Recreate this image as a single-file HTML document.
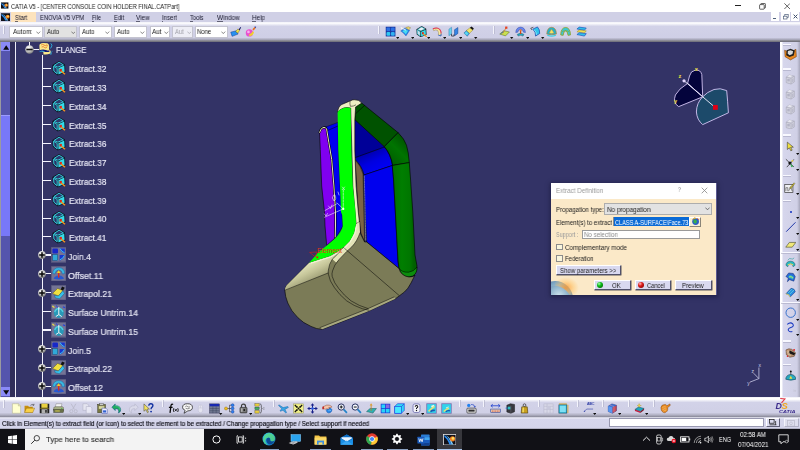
<!DOCTYPE html>
<html><head><meta charset="utf-8"><title>CATIA V5</title>
<style>
*{box-sizing:border-box;margin:0;padding:0}
html,body{width:800px;height:450px;overflow:hidden;background:#333366;font-family:"Liberation Sans",sans-serif;}
body{position:relative}
.abs,.t,i{position:absolute;display:block}
.t{white-space:nowrap;transform-origin:0 50%;will-change:transform}
#title{position:absolute;left:0;top:0;width:800px;height:12px;background:#fff}
#menu{position:absolute;left:0;top:12px;width:800px;height:10px;background:#d0d0e6}
#tb{position:absolute;left:0;top:21.7px;width:800px;height:20.6px;background:linear-gradient(#e4e4f2 0,#fff .8px,#f6f6fb 1.8px,#d2d2e8 4.3px,#cfcfe6 15.5px,#a8a8ba 17.5px,#808086 19px,#6a6a78 20px,#333366 20.6px)}
#view{position:absolute;left:0;top:42px;width:780px;height:354.5px;background:#333366}
#rtb{position:absolute;left:779.8px;top:42px;width:20.2px;height:354.5px;background:linear-gradient(90deg,#fff 0,#fff 1.6px,#d6d6ec 3.3px,#d0d0e6 17px,#a4a4b8 20.2px)}
#btb{position:absolute;left:0;top:396.5px;width:800px;height:21px;background:linear-gradient(#e8e8f4 0,#fff 1px,#fff 2.2px,#d2d2e8 5.5px,#d0d0e6 15.5px,#b0b0c2 18px,#8c8c9c 19.7px,#c8c8d8 20.3px,#f4f4fc 21px)}
#status{position:absolute;left:0;top:417.5px;width:800px;height:11.5px;background:linear-gradient(#f0f0fa 0,#d6d6ec 1px,#d4d4ea 9.5px,#a0a0b0 11px,#505058 11.5px)}
#task{position:absolute;left:0;top:428px;width:800px;height:22px;background:#1c1f2b}
.hl{left:42.5px;width:8.5px;height:1.2px;background:#f4f4ff}
</style></head><body>
<div id="title"></div>
<div id="menu"><i style="left:11px;top:0;width:25px;height:10px;background:#fde3bd"></i></div>
<div id="tb"></div>
<div id="view"></div>
<svg class="abs" style="left:0;top:0" width="800" height="450" viewBox="0 0 800 450">
<defs>
<linearGradient id="gRoll" gradientUnits="userSpaceOnUse" x1="366" y1="150" x2="376" y2="172"><stop offset="0" stop-color="#0000a0"/><stop offset="0.55" stop-color="#0000e0"/><stop offset="1" stop-color="#0000f4"/></linearGradient>
<linearGradient id="gBody" gradientUnits="userSpaceOnUse" x1="300" y1="262" x2="312" y2="286"><stop offset="0" stop-color="#f2f2cc"/><stop offset="0.5" stop-color="#c6c69a"/><stop offset="1" stop-color="#8c8c66"/></linearGradient>
<linearGradient id="gGreenR" gradientUnits="userSpaceOnUse" x1="394" y1="0" x2="414" y2="0"><stop offset="0" stop-color="#007200"/><stop offset="0.4" stop-color="#007e00"/><stop offset="0.8" stop-color="#007600"/><stop offset="1" stop-color="#006000"/></linearGradient>
<linearGradient id="gGreenC" gradientUnits="userSpaceOnUse" x1="388" y1="158" x2="406" y2="140"><stop offset="0" stop-color="#006000"/><stop offset="0.5" stop-color="#007400"/><stop offset="1" stop-color="#005400"/></linearGradient>
</defs>
<g stroke-linejoin="round" stroke-linecap="round">
<!-- purple -->
<path d="M319.6,132 Q320.5,128.5 323,127.6 Q325.6,126.8 326.6,129 L328.9,142.8 L331.7,159.4 L333.9,186 L335.5,212 L335.3,226 L335,238 L326.7,245.5 L325,226 L324.5,212 L321.7,186 L320.3,150 Z" fill="#8000f0" stroke="#000" stroke-width=".6"/>
<!-- blue left strip -->
<path d="M325.6,127 L338,122.4 L338.3,150 L340,186 L342,216 L342.8,226 L336.7,236.5 L335,238 L335.3,226 L335.5,212 L333.9,186 L331.7,159.4 L328.9,142.8 L326.6,129 Z" fill="#0000f0" stroke="#000" stroke-width=".4"/>
<path d="M327.4,130.6 L338,126" fill="none" stroke="#000" stroke-width=".5"/>
<path d="M319.6,132.4 Q320.5,128.5 323,127.6 Q325.6,126.8 326.6,129 L328.9,142.8 L331.7,159.4 L333.9,186 L335.5,212 L335.5,226 L335.2,237" fill="none" stroke="#000" stroke-width="2"/>
<path d="M319.6,132.4 Q320.5,128.5 323,127.6 Q325.6,126.8 326.6,129 L328.9,142.8 L331.7,159.4 L333.9,186 L335.5,212 L335.5,226 L335.2,237" fill="none" stroke="#e4e4b4" stroke-width="1"/>
<!-- dark blue triangle -->
<path d="M355,119 L384.5,147 L355,158 Z" fill="#000098"/>
<!-- rolled blue -->
<path d="M355.4,157.5 L384.5,147 Q390.5,154 392.6,165.4 L364,175 Q362,166 355.4,160 Z" fill="url(#gRoll)" stroke="#000" stroke-width=".6"/>
<!-- big blue face -->
<path d="M364,175 L392.6,165.4 L393.6,180 L398,262 L399,268.5 L366.7,242 L364,190 Z" fill="#0000ee" stroke="#000" stroke-width=".5"/>
<!-- brown -->
<path d="M355.4,160 Q361,166 363,174 L363.9,215 L364.6,242 L361,233 L359.4,221.7 L358.3,212 L356.4,180 Z" fill="#7c6444" stroke="#000" stroke-width=".4"/>
<path d="M364.3,176 L365.2,215 L365.8,240" fill="none" stroke="#c4c49c" stroke-width=".5" stroke-dasharray="1.6 1"/>
<!-- dark green upper band -->
<path d="M355.6,105 L361.7,103.1 L398.3,132.8 L384.5,146.8 L354.9,119.7 Z" fill="#005200" stroke="#000" stroke-width=".6"/>
<path d="M364.5,105.5 L355.3,114" fill="none" stroke="#000" stroke-width=".6"/>
<!-- green corner -->
<path d="M398.3,132.8 Q404.5,139 406.5,145.2 Q408.6,152 409.3,162.6 L392.6,165.4 Q391,154 384.5,146.8 Z" fill="url(#gGreenC)" stroke="#000" stroke-width=".6"/>
<!-- green right band -->
<path d="M392.6,165.4 L409.3,162.6 L410.6,180 L412.8,212 L415,255 L417,266 Q417,276 409,277 Q401,276 399,268 L398,260 L393.6,180 Z" fill="url(#gGreenR)" stroke="#000" stroke-width=".6"/>
<path d="M399,268.5 Q402,272.6 408.5,272.2 Q414,271.6 417,267 Q417.5,276 409,277 Q401,276.5 399,268.5 Z" fill="#0c8c0c" stroke="#000" stroke-width=".5"/>
<!-- cream cap + strip -->
<path d="M337.6,111 Q338.5,106 341.7,104.5 L350,101 Q352.5,99.7 354.1,99.7 Q359.5,99.5 361.7,103.1 L355.6,107 L354.8,120 L354.8,150 L356.1,186 L358.3,212 L359.4,221.7 L360,232.8 L356.1,224 L352.8,186 L350.7,108 Q343,106 337.6,112 Z" fill="#eeeec4" stroke="#000" stroke-width=".6"/>
<path d="M350,101.5 Q349.6,104 350.4,106.3 Q353.5,106.5 355.6,105" fill="none" stroke="#000" stroke-width=".5"/>
<!-- body -->
<path d="M360,232.8 L364.6,242 L366.7,242 L399,268.5 Q401,276 409,277 Q414,277 415,275 L411,283 Q408,289 404.4,292 L395.5,298.7 L368.9,310.9 L346.7,319.8 L322.2,329.3 Q316,329 311,326.4 Q303,323 297.8,317.6 Q291,311 287.8,303 Q285,296 284.9,290.9 Q285,287.5 286.7,285.3 L309.2,262.7 L321.3,258.8 L330,256 L337.8,251.5 L344,246.8 L349.5,241.3 L354.1,232.8 L355.7,225 L356.1,224 L359.4,221.7 Z" fill="#7b7b57" stroke="#000" stroke-width=".6"/>
<!-- cream band along green -->
<path d="M356.1,224 L359.4,221.7 L360,232.8 Q358.5,237 356.5,240.6 Q354.5,244 351.8,246.8 L346.7,251.5 L339.3,259.2 L336.2,262.6 L332.3,259.2 L337.8,253.8 L343.6,247.6 L337.8,251.5 L344,246.8 L349.5,241.3 L354.1,232.8 L355.7,225 Z" fill="#e4e4b8"/>
<!-- light fillet top-left -->
<path d="M309.2,262.7 L321.3,258.8 L330,256 L337.8,251.5 L343.6,247.6 L337.8,253.8 L332.3,259.2 Q329,264 328.4,270 L328,273 L284.9,290.5 Q285,287.5 286.7,285.3 Z" fill="url(#gBody)"/>
<path d="M322.2,329.3 L368.9,310.9 L395.5,298.7 L394,297 L368,308.6 L320,327.6 Z" fill="#a8a880"/>
<g fill="none" stroke="#000" stroke-width=".5">
<path d="M284.9,290.2 L327.8,273.1"/>
<path d="M343.6,247.6 L337.8,253.8 L332.3,259.2 Q329,264 328.4,270 Q328,272 328.4,274.2 Q329.5,281 334.4,287.6 Q339.5,295 346.7,300.9 Q354,306 362.2,308.7 L368.9,310.2"/>
<path d="M360,232.8 Q358.5,237 356.5,240.6 Q354.5,244 351.8,246.8 L346.7,251.5 L339.3,259.2 Q334,265 332.5,271 Q331.6,274 332.2,276.4 Q334,283 338.9,288.7 Q344,295.5 351.1,300.9 Q359,306 368,308.6"/>
<path d="M343.6,247.6 L398.9,295.3"/>
<path d="M320,327.6 L368,308.6 L394,297"/>
</g>
<!-- bright green -->
<path d="M337.6,112 Q343,106 350.7,108 L351.4,150 L352.8,186 L355.5,212 L356.1,224 L355.7,225 L354.1,232.8 Q352.4,237.4 349.5,241.3 L344,246.8 L337.8,251.5 L330,256 L321.3,258.8 L309.2,262.7 L317.8,253.1 L326.3,246 Q332,241.5 335.6,238.1 Q342,231 342.8,226 L342.2,215 L341,212 L340,186 L338.3,150 Z" fill="#00ff00"/>
<path d="M356.5,226 L355,233.4 L350.4,242 L344.8,247.7 L338.6,252.5 L330.6,257 L321.6,259.8 L311,263.2" fill="none" stroke="#fafae4" stroke-width=".9" opacity=".9"/>
<!-- axis overlay -->
<g fill="none" stroke="#ececf8" stroke-width=".6">
<path d="M343.3,208.9 L343.3,188.5" stroke-dasharray="2.2 1.2"/>
<path d="M343.3,208.9 L324.6,217.2"/>
<path d="M343.3,208.9 L337,203"/>
<path d="M336.5,204 L325,210.5"/>
<path d="M333.5,195 Q331,198 334,201 Q337,199 335,195"/>
<path d="M338,192 L339,195"/>
<path d="M342.3,187 L344.6,189.6 M344.6,187 L342.3,189.6"/>
<path d="M328.5,206 L330.5,208.5 L332,205"/>
<path d="M324.5,214 L326,216 L327.5,213.5"/>
</g>
<circle cx="343.3" cy="208.9" r="1.1" fill="#fff"/>
<!-- red element marker -->
<g fill="none" stroke="#e01818" stroke-width=".6"><path d="M310,252.4 L317,252 L315.3,256.3 Z"/></g>
<circle cx="317.3" cy="257.3" r="1.1" fill="#f01010"/>
<text x="317" y="252.7" font-family="Liberation Sans, sans-serif" font-size="6.8" fill="#e43414" textLength="25" lengthAdjust="spacingAndGlyphs">Element</text>
</g>
</svg>

<svg class="abs" style="left:0;top:0" width="800" height="450" viewBox="0 0 800 450">
<g stroke="#d4c4f4" stroke-width=".9" stroke-linejoin="round">
<path d="M702.7,96.8 L701.8,74.6 Q700.5,69.5 695.5,70 Q690.5,71 689.5,76 L687.6,83.4 Z" fill="#04043c"/>
<path d="M702.7,96.8 L687.6,83.4 Q678.5,89 675.4,95 Q672.6,103 678.7,106.6 Z" fill="#04043c"/>
<path d="M702.7,96.8 Q696.5,103 696.4,112 Q697,120 702.7,124.6 L728.4,112.8 L727.6,101.2 L726.7,90.6 Q720,87.5 714,89.5 Q707,92 702.7,96.8 Z" fill="#1c4a6a"/>
<path d="M702.7,96.8 L684.6,81.2 M702.7,96.8 L715.1,107.4" fill="none" stroke="#f0f0ff"/>
</g>
<circle cx="684" cy="80.8" r="1.6" fill="#e4d8ff"/>
<rect x="713" y="105" width="4.8" height="4.8" fill="#e00014"/>
<g font-family="Liberation Sans, sans-serif" font-size="5.6" fill="#f0e040" font-weight="bold"><text x="678.4" y="78.4">z</text><text x="694.8" y="70.6">x</text><text x="674" y="103.4">y</text></g>
<g stroke="#c8c8e4" stroke-width=".8" fill="none"><path d="M758.9,378.6 V367.5 M758.9,378.6 L753.6,373.2 M758.9,378.6 L750,382.1"/></g>
<g font-family="Liberation Sans, sans-serif" font-size="5" fill="#d0d0e8"><text x="758.6" y="367.4">x</text><text x="751.6" y="372.6">z</text><text x="747.2" y="384.6">y</text></g>
</svg>
<div id="rtb"></div>
<div id="dialog" class="abs" style="left:0;top:0">
<div class="abs" style="left:550.7px;top:182.7px;width:166px;height:112.8px;background:#5a5890;box-shadow:0 1px 4px 1px rgba(20,20,50,.55)"></div>
<div class="abs" style="left:551.2px;top:183.2px;width:165px;height:111.8px;background:#fbe9c8;overflow:hidden"><i style="left:0;top:0;width:165px;height:15.5px;background:#fff"></i><i style="left:-14px;top:98px;width:36px;height:36px;border-radius:50%;background:radial-gradient(circle at 60% 35%,#b8d4e0 0,#7fa8c4 35%,#4a6a90 60%,#3a4a70 75%)"></i><i style="left:4px;top:94px;width:24px;height:18px;background:radial-gradient(ellipse at 45% 60%,rgba(255,150,40,.8) 0,rgba(255,190,90,.45) 40%,rgba(255,220,150,0) 70%)"></i><i style="left:-12px;top:102.5px;width:32px;height:32px;border-radius:50%;background:radial-gradient(circle at 62% 30%,#cfe4ec 0,#8fb4cc 30%,#56789c 58%,#3a4a72 78%)"></i></div>
<span class="t" style="left:555.70px;top:185.94px;font-size:6.8px;line-height:9.52px;color:#9a9a9a;transform:scaleX(0.9222);">Extract Definition</span>
<span class="t" style="left:678.40px;top:185.42px;font-size:7.4px;line-height:10.36px;color:#888;transform:scaleX(0.6804);">?</span>
<svg class="abs" style="left:700.5px;top:187.2px" width="7" height="7" viewBox="0 0 7 7"><path d="M.7,.7 L6.3,6.3 M6.3,.7 L.7,6.3" stroke="#888" stroke-width=".8" fill="none"/></svg>
<span class="t" style="left:555.70px;top:204.70px;font-size:7px;line-height:9.8px;color:#1c1c1c;transform:scaleX(0.8712);">Propagation type:</span>
<i style="left:604.2px;top:203px;width:107.5px;height:11.5px;background:#e2e2e2;border:.6px solid #adadad"></i>
<span class="t" style="left:606.60px;top:204.60px;font-size:7px;line-height:9.8px;color:#1c1c1c;transform:scaleX(0.9067);">No propagation</span>
<svg class="abs" style="left:705px;top:207px" width="5" height="4" viewBox="0 0 5 4"><path d="M.4,.6 L2.5,2.8 L4.6,.6" stroke="#444" stroke-width=".7" fill="none"/></svg>
<span class="t" style="left:555.70px;top:217.50px;font-size:7px;line-height:9.8px;color:#1c1c1c;transform:scaleX(0.8688);">Element(s) to extract</span>
<i style="left:613.4px;top:216.7px;width:76px;height:9.8px;background:#fff;border:.6px solid #8a8a8a"></i>
<i style="left:614px;top:217.3px;width:74.8px;height:8.4px;background:#0a6ad6"></i>
<span class="t" style="left:615.00px;top:217.58px;font-size:6.6px;line-height:9.24px;color:#fff;transform:scaleX(0.8479);">CLASS A-SURFACE\Face.73</span>
<i style="left:689.4px;top:216.5px;width:11.2px;height:10.2px;background:#f6eed6;border:.6px solid;border-color:#fff #8a8478 #8a8478 #fff"></i>
<svg class="abs" style="left:690.6px;top:217.4px" width="9" height="8.6" viewBox="0 0 9 8.6"><circle cx="4.6" cy="4.6" r="3.4" fill="#2a5cc8"/><path d="M2.4,3.4 Q4,1.8 5.6,3.2 Q6.4,4.8 5,6.4 Q3.4,6.6 2.6,5.2 Z" fill="#38b048"/><path d="M1,2.8 L4,.4 L5,1.6" fill="#f0c020" stroke="#a06000" stroke-width=".3"/><path d="M6.4,1.2 L7.8,2.8" stroke="#e04020" stroke-width=".8"/></svg>
<span class="t" style="left:555.70px;top:229.90px;font-size:7px;line-height:9.8px;color:#9c9c9c;transform:scaleX(0.7851);">Support :</span>
<i style="left:581.5px;top:229.6px;width:118.6px;height:9.8px;background:#fff;border:.6px solid #9a9a9a"></i>
<span class="t" style="left:583.80px;top:230.00px;font-size:7px;line-height:9.8px;color:#8a8a8a;transform:scaleX(0.8801);">No selection</span>
<i style="left:556.3px;top:243.5px;width:6.4px;height:6.5px;background:#f9f5dc;border:.6px solid #8c8c8c"></i>
<i style="left:556.3px;top:255.2px;width:6.4px;height:6.5px;background:#f9f5dc;border:.6px solid #8c8c8c"></i>
<span class="t" style="left:565.40px;top:242.70px;font-size:7px;line-height:9.8px;color:#1c1c1c;transform:scaleX(0.9004);">Complementary mode</span>
<span class="t" style="left:565.40px;top:254.40px;font-size:7px;line-height:9.8px;color:#1c1c1c;transform:scaleX(0.8517);">Federation</span>
<i style="left:556.3px;top:265.3px;width:64.9px;height:10.2px;background:#d9d9f0;border:.7px solid;border-color:#fff #50506a #50506a #fff;box-shadow:.4px .4px 0 #303040"></i>
<span class="t" style="left:560.20px;top:266.30px;font-size:7px;line-height:9.8px;color:#1c1c1c;transform:scaleX(0.8680);">Show parameters &gt;&gt;</span>
<i style="left:593.5px;top:280px;width:37.2px;height:10.3px;background:#d9d9f0;border:.7px solid;border-color:#fff #50506a #50506a #fff;box-shadow:.4px .4px 0 #303040"></i>
<i style="left:634.5px;top:280px;width:36.8px;height:10.3px;background:#d9d9f0;border:.7px solid;border-color:#fff #50506a #50506a #fff;box-shadow:.4px .4px 0 #303040"></i>
<i style="left:675.3px;top:280px;width:36.5px;height:10.3px;background:#d9d9f0;border:.7px solid;border-color:#fff #50506a #50506a #fff;box-shadow:.4px .4px 0 #303040"></i>
<i style="left:597px;top:282.1px;width:6.2px;height:6.2px;border-radius:50%;background:radial-gradient(circle at 35% 30%,#b0ffb0 0,#10c020 35%,#007000 80%,#004000 100%)"></i>
<i style="left:637.6px;top:282.1px;width:6.2px;height:6.2px;border-radius:50%;background:radial-gradient(circle at 35% 30%,#ffc0c0 0,#e02020 35%,#900000 80%,#500000 100%)"></i>
<span class="t" style="left:611.50px;top:281.00px;font-size:7px;line-height:9.8px;color:#1c1c1c;transform:scaleX(0.8503);">OK</span>
<span class="t" style="left:647.20px;top:281.00px;font-size:7px;line-height:9.8px;color:#1c1c1c;transform:scaleX(0.8169);">Cancel</span>
<span class="t" style="left:682.20px;top:281.00px;font-size:7px;line-height:9.8px;color:#1c1c1c;transform:scaleX(0.8716);">Preview</span>
</div>
<div id="btb"></div>
<div id="status"></div>
<div id="bars" class="abs" style="left:0;top:0">
<i style="left:3.1px;top:25.5px;width:1px;height:8.0px;background:#f4f4fc;box-shadow:.6px 0 0 #b0b0c6"></i>
<i style="left:9px;top:26.2px;width:33.6px;height:12px;background:#fff;border:.6px solid #c4c4d0"></i><span class="t" style="left:12.70px;top:27.30px;font-size:7px;line-height:9.8px;color:#222;transform:scaleX(0.9046);">Autom</span><svg class="abs" style="left:36px;top:30.6px" width="4.6" height="3.4" viewBox="0 0 4.6 3.4"><path d="M.4,.6 L2.3,2.6 L4.2,.6" stroke="#555" stroke-width=".7" fill="none"/></svg>
<span class="t" style="left:31.20px;top:27.30px;font-size:7px;line-height:9.8px;color:#222;transform:scaleX(0.6171);">:</span>
<i style="left:44.2px;top:26.2px;width:33.0px;height:12px;background:#e2e2e2;border:.6px solid #c4c4d0"></i><span class="t" style="left:46.70px;top:27.30px;font-size:7px;line-height:9.8px;color:#222;transform:scaleX(0.8473);">Auto</span><svg class="abs" style="left:70.7px;top:30.6px" width="4.6" height="3.4" viewBox="0 0 4.6 3.4"><path d="M.4,.6 L2.3,2.6 L4.2,.6" stroke="#555" stroke-width=".7" fill="none"/></svg>
<i style="left:79.2px;top:26.2px;width:33.0px;height:12px;background:#fff;border:.6px solid #c4c4d0"></i><span class="t" style="left:82.10px;top:27.30px;font-size:7px;line-height:9.8px;color:#222;transform:scaleX(0.8681);">Auto</span><svg class="abs" style="left:105.2px;top:30.6px" width="4.6" height="3.4" viewBox="0 0 4.6 3.4"><path d="M.4,.6 L2.3,2.6 L4.2,.6" stroke="#555" stroke-width=".7" fill="none"/></svg>
<i style="left:113.8px;top:26.2px;width:33.2px;height:12px;background:#fff;border:.6px solid #c4c4d0"></i><span class="t" style="left:116.70px;top:27.30px;font-size:7px;line-height:9.8px;color:#222;transform:scaleX(0.8750);">Auto</span><svg class="abs" style="left:140px;top:30.6px" width="4.6" height="3.4" viewBox="0 0 4.6 3.4"><path d="M.4,.6 L2.3,2.6 L4.2,.6" stroke="#555" stroke-width=".7" fill="none"/></svg>
<i style="left:149.5px;top:26.2px;width:20.5px;height:12px;background:#fff;border:.6px solid #c4c4d0"></i><span class="t" style="left:151.75px;top:27.30px;font-size:7px;line-height:9.8px;color:#222;transform:scaleX(0.9042);">Aut</span><svg class="abs" style="left:164px;top:30.6px" width="4.6" height="3.4" viewBox="0 0 4.6 3.4"><path d="M.4,.6 L2.3,2.6 L4.2,.6" stroke="#555" stroke-width=".7" fill="none"/></svg>
<i style="left:171.75px;top:26.2px;width:20.8px;height:12px;background:#eeeef6;border:.6px solid #c4c4d0"></i><span class="t" style="left:175.00px;top:27.30px;font-size:7px;line-height:9.8px;color:#a0a0a8;transform:scaleX(0.8328);">Aut</span><svg class="abs" style="left:186.8px;top:30.6px" width="4.6" height="3.4" viewBox="0 0 4.6 3.4"><path d="M.4,.6 L2.3,2.6 L4.2,.6" stroke="#a0a0a8" stroke-width=".7" fill="none"/></svg>
<i style="left:194.5px;top:26.2px;width:33.0px;height:12px;background:#fff;border:.6px solid #c4c4d0"></i><span class="t" style="left:197.00px;top:27.30px;font-size:7px;line-height:9.8px;color:#222;transform:scaleX(0.8516);">None</span><svg class="abs" style="left:221.2px;top:30.6px" width="4.6" height="3.4" viewBox="0 0 4.6 3.4"><path d="M.4,.6 L2.3,2.6 L4.2,.6" stroke="#555" stroke-width=".7" fill="none"/></svg>
<svg class="abs" style="left:230px;top:26px" width="11.5" height="11.5" viewBox="0 0 12 12"><path d="M.8,6.4 L6.6,5 L8.4,8.4 L2.2,10.8 Z" fill="#2890f0" stroke="#0a3890" stroke-width=".5"/><path d="M6,5.6 L8.4,3 L10,4.6 L8,7.6 Z" fill="#f0e040" stroke="#605000" stroke-width=".4"/><path d="M9,3.6 L11,1 L11.6,1.6 L10,4.4 Z" fill="#101060"/></svg>
<svg class="abs" style="left:245px;top:26px" width="11.5" height="11.5" viewBox="0 0 12 12"><circle cx="4.6" cy="7.2" r="3.8" fill="#e850d0"/><circle cx="3.6" cy="6.2" r="1.4" fill="#f8b0f0"/><path d="M4,9 Q7,8 8,5.4 L9.4,6.2 Q8.6,10 5,10.8 Z" fill="#f0d030"/><path d="M7.6,3.4 L10.4,.8 L11.4,1.8 L9,4.6 Z" fill="#e87020"/><path d="M9.6,.8 L11.6,.6 L11.4,2.4 Z" fill="#2040c0"/></svg>
<i style="left:378.1px;top:25.5px;width:1px;height:8.0px;background:#f4f4fc;box-shadow:.6px 0 0 #b0b0c6"></i>
<svg class="abs" style="left:384.6px;top:25.6px" width="11.2" height="11.2" viewBox="0 0 12 12"><rect x=".8" y=".8" width="10.4" height="10.4" fill="#1838a0"/><rect x="1.6" y="1.6" width="4" height="4" rx="1" fill="#2c70e4"/><rect x="6.4" y="1.6" width="4" height="4" rx="1" fill="#2c70e4"/><rect x="1.6" y="6.4" width="4" height="4" rx="1" fill="#30c8f0"/><rect x="6.4" y="6.4" width="4" height="4" rx="1" fill="#30b0f0"/></svg>
<svg class="abs" style="left:395.6px;top:37.4px" width="3.4" height="2" viewBox="0 0 3.4 2"><path d="M0,0 H3.4 L1.7,2 Z" fill="#101010"/></svg>
<svg class="abs" style="left:400px;top:25.6px" width="11.2" height="11.2" viewBox="0 0 12 12"><path d="M.8,5.4 L5,2.4 L10.4,4.6 L6.4,10.6 Q4,7.4 .8,5.4 Z" fill="#2488f0" stroke="#1048a0" stroke-width=".4"/><path d="M2.6,5.6 L5.2,3.8 L8.6,5.2 L6.2,8.8 Q4.6,6.8 2.6,5.6 Z" fill="#48dcf0"/><path d="M6,1.8 L9,.8 L11.4,2 L9.4,4 Z" fill="#e8d870" stroke="#706020" stroke-width=".4"/><path d="M1,2 L6.4,4.4" stroke="#f8f8f8" stroke-width=".9"/><path d="M.6,1.4 L2.6,1.8 L1.6,3.2 Z" fill="#f8f8f8"/></svg>
<svg class="abs" style="left:411px;top:37.4px" width="3.4" height="2" viewBox="0 0 3.4 2"><path d="M0,0 H3.4 L1.7,2 Z" fill="#101010"/></svg>
<svg class="abs" style="left:416px;top:25.6px" width="11.2" height="11.2" viewBox="0 0 12 12"><path d="M6,0 L11,3 L11.4,9.4 L5,12 L.8,9 L.4,3.4 Z" fill="#182028"/><path d="M6,1 L9.6,3.2 L5,5.2 L1.8,3.8 Z" fill="#e8eef4" stroke="#38d8e8" stroke-width=".6"/><path d="M1.3,4.4 L4.4,6.2 L4.4,10.6 L1.6,8.6 Z" fill="#d0dce8" stroke="#38d8e8" stroke-width=".6"/><path d="M5.4,6.1 L10.3,3.9 L10.6,9 L5.4,11.2 Z" fill="#34dcea"/><rect x="6.4" y="6.6" width="2" height="2.2" fill="#e02818"/><path d="M7.8,8.4 L11.4,11.6" stroke="#f09020" stroke-width="1.3"/></svg>
<svg class="abs" style="left:427px;top:37.4px" width="3.4" height="2" viewBox="0 0 3.4 2"><path d="M0,0 H3.4 L1.7,2 Z" fill="#101010"/></svg>
<svg class="abs" style="left:431.8px;top:25.6px" width="11.2" height="11.2" viewBox="0 0 12 12"><path d="M1,3 Q6,1 8.6,4 Q10.4,6.6 9.6,10.6 L6.8,9.8 Q7.6,6.4 6,4.8 Q4.2,3.6 1.8,5 Z" fill="#f8e8a0" stroke="#806830" stroke-width=".4"/><path d="M1,3 Q6,1 8.6,4 Q9.8,5.6 9.8,8" stroke="#e83858" stroke-width="1.1" fill="none"/><path d="M6.8,9.8 L9.6,10.6 L9.8,8.4" stroke="#2860d0" stroke-width=".9" fill="none"/></svg>
<svg class="abs" style="left:442.8px;top:37.4px" width="3.4" height="2" viewBox="0 0 3.4 2"><path d="M0,0 H3.4 L1.7,2 Z" fill="#101010"/></svg>
<svg class="abs" style="left:447.6px;top:25.6px" width="11.2" height="11.2" viewBox="0 0 12 12"><path d="M1,3.4 L3.8,1.4 V8.4 L1,10.4 Z" fill="#68d4f0" stroke="#2878b0" stroke-width=".5"/><path d="M7,4 L10.6,1.6 V8 L7,10.6 Z" fill="#3484e4" stroke="#103c88" stroke-width=".5"/><path d="M3.8,8.4 V10.8 H6.4 V9" fill="none" stroke="#202838" stroke-width=".8"/></svg>
<svg class="abs" style="left:458.6px;top:37.4px" width="3.4" height="2" viewBox="0 0 3.4 2"><path d="M0,0 H3.4 L1.7,2 Z" fill="#101010"/></svg>
<svg class="abs" style="left:463.4px;top:25.6px" width="11.2" height="11.2" viewBox="0 0 12 12"><path d="M3.4,5 L7.4,2 L10.6,4.4 L6.8,8 Z" fill="#f0e468" stroke="#706020" stroke-width=".4"/><path d="M1,7.6 L3.4,5 L6.8,8 L4.6,11 Z" fill="#38a8e8" stroke="#104880" stroke-width=".4"/><path d="M1.6,7.8 L3.6,6 L5.8,8 L4.2,10 Z" fill="#58d8f0"/><path d="M7.4,2 L9.2,.6 L11.6,2.6 L10.6,4.4 Z" fill="#101010"/></svg>
<svg class="abs" style="left:474.4px;top:37.4px" width="3.4" height="2" viewBox="0 0 3.4 2"><path d="M0,0 H3.4 L1.7,2 Z" fill="#101010"/></svg>
<i style="left:493.1px;top:25.5px;width:1px;height:8.0px;background:#f4f4fc;box-shadow:.6px 0 0 #b0b0c6"></i>
<svg class="abs" style="left:499.4px;top:25.6px" width="11.2" height="11.2" viewBox="0 0 12 12"><path d="M.8,8.6 L5,5 L11.2,6.4 L7,10.6 Z" fill="#c8e050" stroke="#506010" stroke-width=".5"/><path d="M4,8 Q6,5 7.6,1.6" stroke="#e08020" stroke-width=".9" fill="none"/><rect x="6.6" y=".6" width="2.4" height="2.4" fill="#e84020"/><path d="M1.6,8.6 L5,6 " stroke="#2060c0" stroke-width=".8"/></svg>
<svg class="abs" style="left:510.4px;top:37.4px" width="3.4" height="2" viewBox="0 0 3.4 2"><path d="M0,0 H3.4 L1.7,2 Z" fill="#101010"/></svg>
<svg class="abs" style="left:515px;top:25.6px" width="11.2" height="11.2" viewBox="0 0 12 12"><path d="M.8,7 Q1.2,1.4 6,1.2 Q10.8,1.4 11.2,7 L9,6.6 Q8.6,3.6 6,3.4 Q3.4,3.6 3,6.6 Z" fill="#6888f0" stroke="#3040a0" stroke-width=".5"/><path d="M2.4,9 Q6,6.4 9.6,9 L8.6,10.8 Q6,9.2 3.4,10.8 Z" fill="#28a8c0" stroke="#0a4858" stroke-width=".4"/><path d="M6,4.4 V8.6" stroke="#d04818" stroke-width="1.4"/><circle cx="6" cy="4.6" r="1.1" fill="#e87830"/></svg>
<svg class="abs" style="left:526px;top:37.4px" width="3.4" height="2" viewBox="0 0 3.4 2"><path d="M0,0 H3.4 L1.7,2 Z" fill="#101010"/></svg>
<svg class="abs" style="left:530.4px;top:25.6px" width="11.2" height="11.2" viewBox="0 0 12 12"><path d="M3,3.4 L8,1 Q10.6,3.6 10.4,8 L6,10.8 Q6.4,6.4 3,3.4 Z" fill="#30c4ec" stroke="#1848b0" stroke-width=".8"/><path d="M4.4,4 Q7,6.6 7,9.4" fill="none" stroke="#a0f0ff" stroke-width=".7"/><path d="M.8,2.4 L3.6,1.4 M.8,2.4 L2,4.2" stroke="#202020" stroke-width=".7" fill="none"/></svg>
<svg class="abs" style="left:541.4px;top:37.4px" width="3.4" height="2" viewBox="0 0 3.4 2"><path d="M0,0 H3.4 L1.7,2 Z" fill="#101010"/></svg>
<svg class="abs" style="left:546px;top:25.6px" width="11.2" height="11.2" viewBox="0 0 12 12"><path d="M.8,8.6 Q1,1.6 6,1.4 Q11,1.6 11.2,8.6 Q6,10.4 .8,8.6 Z" fill="#28b0c4" stroke="#c07820" stroke-width=".6"/><path d="M3.4,7.6 L6,3.4 L8.6,7.6 Q6,8.6 3.4,7.6 Z" fill="#f4e468" stroke="#d08020" stroke-width=".4"/><path d="M1.4,10 Q6,11.8 10.6,10" stroke="#40d0e8" stroke-width="1.2" fill="none"/></svg>
<svg class="abs" style="left:560px;top:25.6px" width="11.2" height="11.2" viewBox="0 0 12 12"><path d="M.8,9.6 Q1,1.8 6,1.6 Q11,1.8 11.2,9.6 L8.6,10 Q8.4,5.6 6,5.4 Q3.6,5.6 3.4,10 Z" fill="#38c8d8" stroke="#90a020" stroke-width=".9"/><path d="M2.4,6 Q6,3.6 9.6,6" fill="none" stroke="#90a020" stroke-width=".7"/></svg>
<svg class="abs" style="left:575.6px;top:25.6px" width="11.2" height="11.2" viewBox="0 0 12 12"><path d="M1,3.2 L3.4,1.2 L11,2.2 L9,4.6 Z" fill="#30c0e8" stroke="#1850c0" stroke-width=".7"/><path d="M1,6.2 L3.4,4.2 L11,5.2 L9,7.6 Z" fill="#f0e050" stroke="#807010" stroke-width=".4"/><path d="M1,9.2 L3.4,7.2 L11,8.2 L9,10.8 Z" fill="#30c0e8" stroke="#1850c0" stroke-width=".7"/></svg>
<i style="left:771px;top:12.4px;width:8.4px;height:8.8px;background:#fff"></i>
<i style="left:781.3px;top:12.4px;width:8.4px;height:8.8px;background:#fff"></i>
<i style="left:791px;top:12.4px;width:8.4px;height:8.8px;background:#fff"></i>
<i style="left:773.2px;top:18.4px;width:3px;height:1px;background:#50607c"></i>
<svg class="abs" style="left:782.6px;top:14px" width="6" height="6" viewBox="0 0 6 6"><rect x="1.8" y=".6" width="3.4" height="2.8" fill="none" stroke="#50607c" stroke-width=".7"/><rect x=".6" y="2.2" width="3.4" height="2.8" fill="#fff" stroke="#50607c" stroke-width=".7"/></svg>
<svg class="abs" style="left:792.8px;top:14.4px" width="5" height="5" viewBox="0 0 5 5"><path d="M.6,.6 L4.4,4.4 M4.4,.6 L.6,4.4" stroke="#40506c" stroke-width="1"/></svg>
<i style="left:735px;top:5.2px;width:6px;height:.8px;background:#222"></i>
<svg class="abs" style="left:758.6px;top:2.6px" width="7" height="7" viewBox="0 0 7 7"><rect x=".6" y="1.6" width="4.6" height="4.6" rx=".6" fill="none" stroke="#222" stroke-width=".7"/><path d="M1.8,1.6 V.9 Q1.8,.5 2.3,.5 H5.8 Q6.4,.5 6.4,1.1 V4.6 Q6.4,5 5.9,5 H5.2" fill="none" stroke="#222" stroke-width=".7"/></svg>
<svg class="abs" style="left:783.6px;top:2.8px" width="6.4" height="6.4" viewBox="0 0 6.4 6.4"><path d="M.4,.4 L6,6 M6,.4 L.4,6" stroke="#222" stroke-width=".7"/></svg>
<svg class="abs" style="left:1.3px;top:2.4px" width="7.4" height="7" viewBox="0 0 12 10"><rect width="12" height="10" fill="#101018"/><path d="M.6,.6 Q4,2.4 7.6,9.4 L5.6,9.4 Q3.6,4.6 .6,2.8 Z" fill="#2a8cf0"/><path d="M2.4,.6 Q6.4,3 9.4,9.4 L7.6,9.4 Q5,3.2 2.4,.6 Z" fill="#7fd0ff"/><circle cx="8.6" cy="4.4" r="2.5" fill="#f08020"/><circle cx="9" cy="4" r="1.2" fill="#ffe060"/></svg>
<svg class="abs" style="left:0.8px;top:13px" width="9.3" height="8.3" viewBox="0 0 12 10"><rect width="12" height="10" fill="#101018"/><path d="M.6,.6 Q4,2.4 7.6,9.4 L5.6,9.4 Q3.6,4.6 .6,2.8 Z" fill="#2a8cf0"/><path d="M2.4,.6 Q6.4,3 9.4,9.4 L7.6,9.4 Q5,3.2 2.4,.6 Z" fill="#7fd0ff"/><circle cx="8.6" cy="4.4" r="2.5" fill="#f08020"/><circle cx="9" cy="4" r="1.2" fill="#ffe060"/></svg>
<i style="left:3.1px;top:400px;width:1px;height:8px;background:#f4f4fc;box-shadow:.6px 0 0 #b0b0c6"></i>
<svg class="abs" style="left:10.5px;top:402.6px" width="11" height="11" viewBox="0 0 12 12"><path d="M1.5,.8 H8 L10.5,3.2 V11.2 H1.5 Z" fill="#ffffd0" stroke="#b0b090" stroke-width=".6"/><path d="M8,.8 V3.2 H10.5" fill="#e8e8b0" stroke="#b0b090" stroke-width=".5"/></svg>
<svg class="abs" style="left:24px;top:402.6px" width="11" height="11" viewBox="0 0 12 12"><path d="M.6,3 H4.4 L5.4,4.2 H9.6 V10.4 H.6 Z" fill="#c89010"/><path d="M.6,10.4 L2.6,5.6 H11.6 L9.6,10.4 Z" fill="#f8d048" stroke="#805800" stroke-width=".4"/><path d="M7,2.6 Q9,.6 10.8,2.4 M10.8,2.4 L10.9,.9 M10.8,2.4 L9.4,2.5" stroke="#303030" stroke-width=".6" fill="none"/></svg>
<svg class="abs" style="left:38.5px;top:402.6px" width="11" height="11" viewBox="0 0 12 12"><rect x=".8" y=".8" width="10.4" height="10.4" fill="#202020"/><rect x="2.6" y=".8" width="6.8" height="4.4" fill="#e8d040"/><rect x="2.8" y="6.8" width="6.4" height="4.4" fill="#b0b0b0"/><rect x="6.8" y="7.6" width="1.6" height="3" fill="#202020"/><rect x="1.4" y="5.6" width="9.2" height=".8" fill="#908020"/></svg>
<svg class="abs" style="left:53px;top:402.6px" width="11" height="11" viewBox="0 0 12 12"><path d="M3.4,.8 L9.8,.8 L8.8,4.6 H2.4 Z" fill="#f4f4f4" stroke="#606060" stroke-width=".4"/><path d="M.8,5 L2.6,4 H10.4 L11.4,5 V8.6 H.8 Z" fill="#a8b088" stroke="#404030" stroke-width=".4"/><rect x=".8" y="7" width="10.6" height="3.4" fill="#687048" stroke="#303020" stroke-width=".4"/><rect x="2.4" y="8.2" width="5" height="1" fill="#e8d850"/><circle cx="9.6" cy="6" r=".6" fill="#30c030"/></svg>
<svg class="abs" style="left:67.5px;top:402.6px" width="11" height="11" viewBox="0 0 12 12"><path d="M3.4,.8 L7,7 M8.6,.8 L5,7" stroke="#b8b8c8" stroke-width=".9" fill="none"/><circle cx="3.6" cy="9" r="1.7" fill="none" stroke="#b8b8c8" stroke-width=".9"/><circle cx="8.4" cy="9" r="1.7" fill="none" stroke="#b8b8c8" stroke-width=".9"/></svg>
<svg class="abs" style="left:82px;top:402.6px" width="11" height="11" viewBox="0 0 12 12"><path d="M1,.8 H5.6 L7.2,2.4 V8 H1 Z" fill="#e4e4f0" stroke="#b0b0c4" stroke-width=".6"/><path d="M4.6,3.8 H9.2 L10.8,5.4 V11.2 H4.6 Z" fill="#e8e8f4" stroke="#b0b0c4" stroke-width=".6"/></svg>
<svg class="abs" style="left:97px;top:402.6px" width="11" height="11" viewBox="0 0 12 12"><rect x=".8" y="1.6" width="8.4" height="9" fill="#787840" stroke="#303018" stroke-width=".5"/><rect x="3" y=".6" width="4" height="2" fill="#c8c8c8" stroke="#404040" stroke-width=".4"/><rect x="2" y="3.4" width="6" height="3" fill="#d8d8a0"/><path d="M5.4,5.6 H9.6 L11.2,7.2 V11.4 H5.4 Z" fill="#f0f0ff" stroke="#3040a0" stroke-width=".5"/><rect x="6.6" y="8" width="3.4" height="2.4" fill="#3060d0"/></svg>
<svg class="abs" style="left:111.3px;top:402.6px" width="11" height="11" viewBox="0 0 12 12"><path d="M1,4.6 L4.6,1 V3 Q10.4,2.6 10.6,7.6 Q10.4,10.2 8,10.8 Q9,8.8 8,7.2 Q7,6 4.6,6.2 V8.2 Z" fill="#20b060" stroke="#0a5080" stroke-width=".6"/><path d="M4.6,3 Q9.6,3 10,7.4" stroke="#70e0a0" stroke-width=".6" fill="none"/></svg>
<svg class="abs" style="left:127.5px;top:402.6px" width="11" height="11" viewBox="0 0 12 12"><path d="M11,4.6 L7.4,1 V3 Q1.6,2.6 1.4,7.6 Q1.6,10.2 4,10.8 Q3,8.8 4,7.2 Q5,6 7.4,6.2 V8.2 Z" fill="#dadaea" stroke="#b4b4c8" stroke-width=".6"/></svg>
<svg class="abs" style="left:143px;top:402.6px" width="11" height="11" viewBox="0 0 12 12"><path d="M1,1 L1,9 L3.2,7.2 L4.8,10.6 L6,10 L4.4,6.8 L7,6.6 Z" fill="#f0e060" stroke="#303030" stroke-width=".5"/><path d="M6.4,3 Q6.4,.8 8.6,.8 Q10.8,.8 10.8,2.8 Q10.8,4.2 9.4,5 Q8.8,5.6 8.8,6.8" fill="none" stroke="#1030a0" stroke-width="1.5"/><circle cx="8.8" cy="9.4" r="1" fill="#1030a0"/></svg>
<svg class="abs" style="left:122px;top:413.4px" width="3.4" height="2" viewBox="0 0 3.4 2"><path d="M0,0 H3.4 L1.7,2 Z" fill="#101010"/></svg>
<svg class="abs" style="left:138px;top:413.4px" width="3.4" height="2" viewBox="0 0 3.4 2"><path d="M0,0 H3.4 L1.7,2 Z" fill="#101010"/></svg>
<i style="left:161.5px;top:400px;width:1px;height:7px;background:#f4f4fc;box-shadow:.6px 0 0 #b0b0c6"></i>
<svg class="abs" style="left:167.5px;top:402.6px" width="11" height="11" viewBox="0 0 12 12"><path d="M5.6,1.6 Q3.6,.6 3.2,3 L2.2,10.8 M1,4.8 H5" stroke="#080808" stroke-width="1.4" fill="none"/><path d="M6.4,5.6 Q5.2,7.6 6.4,9.8 M10.6,5.6 Q11.8,7.6 10.6,9.8" stroke="#080808" stroke-width=".9" fill="none"/><path d="M7.4,6.6 L9.6,9 M9.6,6.6 L7.4,9" stroke="#080808" stroke-width=".9"/></svg>
<svg class="abs" style="left:182px;top:402.6px" width="11" height="11" viewBox="0 0 12 12"><path d="M6,.8 Q11.4,.8 11.4,4.8 Q11.4,8.4 6.4,8.6 L2.2,11.2 L3.4,8 Q.6,7 .6,4.8 Q.6,.8 6,.8 Z" fill="#f4f4f4" stroke="#202020" stroke-width=".8"/><path d="M3.6,4 Q5,2.6 6.4,4 Q7.6,5.2 8.8,4 M4,5.8 Q6,6.8 8.4,5.8" stroke="#404040" stroke-width=".6" fill="none"/></svg>
<svg class="abs" style="left:195px;top:402.6px" width="11" height="11" viewBox="0 0 12 12"><rect x="3.6" y="2" width="4.8" height="8.6" rx="2.4" fill="#e4e4f0" stroke="#c0c0d4" stroke-width=".6"/><path d="M6,2 V5.4 M3.6,5.4 H8.4" stroke="#c0c0d4" stroke-width=".5"/></svg>
<svg class="abs" style="left:208.6px;top:402.6px" width="11" height="11" viewBox="0 0 12 12"><rect x=".8" y="1" width="10.4" height="10" fill="#707890" stroke="#202040" stroke-width=".5"/><rect x=".8" y="1" width="10.4" height="2.6" fill="#1828b0"/><path d="M.8,6 H11.2 M.8,8.4 H11.2 M4.2,3.6 V11 M7.8,3.6 V11" stroke="#303850" stroke-width=".4"/></svg>
<svg class="abs" style="left:223.8px;top:402.6px" width="11" height="11" viewBox="0 0 12 12"><path d="M3.4,6 H6 M6,2.4 V9.6 M6,2.4 H8 M6,6 H8 M6,9.6 H8" stroke="#202020" stroke-width=".6" fill="none"/><circle cx="2.2" cy="6" r="1.7" fill="#f0c020" stroke="#805800" stroke-width=".4"/><circle cx="9.4" cy="2.4" r="1.6" fill="#3080f0" stroke="#103080" stroke-width=".4"/><circle cx="9.4" cy="6" r="1.6" fill="#3080f0" stroke="#103080" stroke-width=".4"/><circle cx="9.4" cy="9.6" r="1.6" fill="#3080f0" stroke="#103080" stroke-width=".4"/></svg>
<svg class="abs" style="left:238.4px;top:402.6px" width="11" height="11" viewBox="0 0 12 12"><path d="M3.8,5 V3.6 Q3.8,1.2 6,1.2 Q8.2,1.2 8.2,3.6 V5" fill="none" stroke="#404040" stroke-width="1.3"/><rect x="2.2" y="4.8" width="7.6" height="6" rx=".8" fill="#787878" stroke="#202020" stroke-width=".7"/><rect x="3.2" y="5.8" width="1.8" height="3.8" fill="#b0b0b0"/><circle cx="6.8" cy="7.6" r="1" fill="#181818"/></svg>
<svg class="abs" style="left:254px;top:402.6px" width="11" height="11" viewBox="0 0 12 12"><rect x="1" y=".8" width="4.6" height="2.6" fill="#e8d040" stroke="#504000" stroke-width=".4"/><rect x="1" y="4.6" width="4.6" height="2.6" fill="#40b060" stroke="#104020" stroke-width=".4"/><rect x="1" y="8.4" width="4.6" height="2.6" fill="#e8d040" stroke="#504000" stroke-width=".4"/><path d="M6.6,1 Q8,1 8,3 V5 Q8,6 9,6 Q8,6 8,7 V9 Q8,11 6.6,11" fill="none" stroke="#303030" stroke-width=".7"/><path d="M10,5.2 H11.4 M10,6.8 H11.4" stroke="#505050" stroke-width=".5"/></svg>
<svg class="abs" style="left:219.2px;top:413.4px" width="3.4" height="2" viewBox="0 0 3.4 2"><path d="M0,0 H3.4 L1.7,2 Z" fill="#101010"/></svg>
<svg class="abs" style="left:248.8px;top:413.4px" width="3.4" height="2" viewBox="0 0 3.4 2"><path d="M0,0 H3.4 L1.7,2 Z" fill="#101010"/></svg>
<i style="left:272.5px;top:400px;width:1px;height:7px;background:#f4f4fc;box-shadow:.6px 0 0 #b0b0c6"></i>
<svg class="abs" style="left:278px;top:402.6px" width="11" height="11" viewBox="0 0 12 12"><path d="M1,2 L5.6,5 L10.6,3.8 L11.4,4.8 L7.6,7 L9.4,10.4 L8.4,10.8 L5.4,8 L2.6,9 L2.2,8.2 L4.2,6.4 L.6,2.8 Z" fill="#38a4e4" stroke="#1860a8" stroke-width=".5"/></svg>
<svg class="abs" style="left:292.6px;top:402.6px" width="11" height="11" viewBox="0 0 12 12"><rect x=".8" y="1" width="10.4" height="10" fill="#f0f088" stroke="#90904c" stroke-width=".5"/><path d="M2,2.2 L4.4,4.6 M10,2.2 L7.6,4.6 M2,9.8 L4.4,7.4 M10,9.8 L7.6,7.4" stroke="#101010" stroke-width="1.3"/><path d="M3.4,5.2 L5.2,5.2 L5.2,3.4 Z M8.6,5.2 L6.8,5.2 L6.8,3.4 Z M3.4,6.8 L5.2,6.8 L5.2,8.6 Z M8.6,6.8 L6.8,6.8 L6.8,8.6 Z" fill="#101010"/><circle cx="6" cy="6" r="1" fill="#101010"/></svg>
<svg class="abs" style="left:307.4px;top:402.6px" width="11" height="11" viewBox="0 0 12 12"><path d="M6,1.4 V10.6 M1.4,6 H10.6" stroke="#182088" stroke-width="1.1"/><path d="M6,.2 L8,2.8 H4 Z M6,11.8 L8,9.2 H4 Z M.2,6 L2.8,4 V8 Z M11.8,6 L9.2,4 V8 Z" fill="#182088"/><circle cx="6" cy="6" r="1.5" fill="#3060e0"/></svg>
<svg class="abs" style="left:321.8px;top:402.6px" width="11" height="11" viewBox="0 0 12 12"><path d="M6.2,5.4 Q9.6,4.6 11,7.4 Q10.6,10.6 7.4,11 Q4.8,10.6 4.6,8 Z" fill="#2888e8" stroke="#104090" stroke-width=".4"/><path d="M7,8.4 Q8.4,7.4 9.8,8.4" stroke="#90d0ff" stroke-width=".7" fill="none"/><path d="M.8,4.2 L2.8,3.4 Q5,1.6 8,2.4 L10.4,3.6 Q11.2,4.6 10,5 L7.4,4.8 Q8.4,6 7.4,6.6 L4.6,6.4 Q3.2,7.4 2.6,6.4 L.8,6.6 Z" fill="#f4c4a8" stroke="#803828" stroke-width=".5"/><path d="M.6,4 L2.2,3.8 L2.2,6.6 L.6,6.8 Z" fill="#c82828"/></svg>
<svg class="abs" style="left:336.6px;top:402.6px" width="11" height="11" viewBox="0 0 12 12"><circle cx="4.6" cy="4.4" r="3.4" fill="#f4f8ff" stroke="#182050" stroke-width="1"/><path d="M7.2,7 L10.8,10.8" stroke="#2484c8" stroke-width="1.9"/><path d="M3,4.4 H6.2 M4.6,2.8 V6" stroke="#101010" stroke-width="1.1"/></svg>
<svg class="abs" style="left:351px;top:402.6px" width="11" height="11" viewBox="0 0 12 12"><circle cx="4.6" cy="4.4" r="3.4" fill="#f4f8ff" stroke="#182050" stroke-width="1"/><path d="M7.2,7 L10.8,10.8" stroke="#2484c8" stroke-width="1.9"/><path d="M3,4.4 H6.2" stroke="#101010" stroke-width="1.1"/></svg>
<svg class="abs" style="left:366px;top:402.6px" width="11" height="11" viewBox="0 0 12 12"><path d="M.6,9.4 L4.4,6 H11.4 L7.6,11 Z" fill="#30b0b0" stroke="#0a5050" stroke-width=".5"/><path d="M5.6,8.6 V1.8" stroke="#c08020" stroke-width=".9"/><path d="M5.6,.4 L4,2.8 H7.2 Z" fill="#e0a030"/></svg>
<svg class="abs" style="left:380px;top:402.6px" width="11" height="11" viewBox="0 0 12 12"><rect x=".8" y=".8" width="10.4" height="10.4" fill="#2038d8"/><rect x="1.6" y="1.6" width="4" height="4" fill="#28d4f8"/><rect x="6.4" y="1.6" width="4" height="4" fill="#8868e0"/><rect x="1.6" y="6.4" width="4" height="4" fill="#28d4f8"/><rect x="6.4" y="6.4" width="4" height="4" fill="#28d4f8"/></svg>
<svg class="abs" style="left:394.4px;top:402.6px" width="11" height="11" viewBox="0 0 12 12"><path d="M.8,3.8 L3.8,.8 H11.2 V8 L8.2,11.2 H.8 Z" fill="#30d8f8" stroke="#2040e0" stroke-width=".7"/><path d="M8.2,3.8 L11.2,.8" fill="none" stroke="#2040e0" stroke-width=".7"/><rect x=".8" y="3.8" width="7.4" height="7.4" fill="#48e8ff" stroke="#2040e0" stroke-width=".7"/></svg>
<svg class="abs" style="left:410.6px;top:402.6px" width="11" height="11" viewBox="0 0 12 12"><rect x="2.2" y="1" width="7.6" height="9.4" rx="2" fill="#f4f4fa" stroke="#7070b0" stroke-width=".9"/><path d="M4.6,4 Q4.6,2.8 6,2.8 Q7.4,2.8 7.4,4 Q7.4,4.9 6,5.6 V6.6" fill="none" stroke="#101010" stroke-width="1.1"/><circle cx="6" cy="8.2" r=".75" fill="#101010"/></svg>
<svg class="abs" style="left:426.4px;top:402.6px" width="11" height="11" viewBox="0 0 12 12"><rect x=".8" y=".8" width="10.4" height="10.4" fill="#30d4ec" stroke="#8070b0" stroke-width=".9"/><path d="M2,8.6 L6.4,4.6 L9.6,3 L9.4,5 L6.4,7 L3.6,9.6 Z" fill="#e8e070"/><path d="M5.4,3.4 L8.4,2 L9.2,3.2 L6.4,4.8 Z" fill="#f4f4e0"/><path d="M4.4,8.8 Q7,6.6 10,7.4 L9.4,9 Q7,8.6 5.4,10 Z" fill="#1858b0"/></svg>
<svg class="abs" style="left:440.6px;top:402.6px" width="11" height="11" viewBox="0 0 12 12"><rect x=".8" y=".8" width="10.4" height="10.4" fill="#30d4ec" stroke="#8070b0" stroke-width=".9"/><path d="M2.4,8.8 L6,6 L9,5 L8.8,6.6 L6,8 L3.8,9.8 Z" fill="#e8e070"/><path d="M4.8,9 Q7.4,7 10,7.8 L9.6,9.2 Q7.2,8.8 5.6,10 Z" fill="#1858b0"/><path d="M5.4,5.4 L8.4,4.2" stroke="#f4f4e0" stroke-width=".9"/></svg>
<svg class="abs" style="left:405.6px;top:413.4px" width="3.4" height="2" viewBox="0 0 3.4 2"><path d="M0,0 H3.4 L1.7,2 Z" fill="#101010"/></svg>
<svg class="abs" style="left:420.6px;top:413.4px" width="3.4" height="2" viewBox="0 0 3.4 2"><path d="M0,0 H3.4 L1.7,2 Z" fill="#101010"/></svg>
<i style="left:458.5px;top:400px;width:1px;height:7px;background:#f4f4fc;box-shadow:.6px 0 0 #b0b0c6"></i>
<svg class="abs" style="left:465.6px;top:402.6px" width="11" height="11" viewBox="0 0 12 12"><circle cx="3" cy="2.6" r="1.8" fill="#2080f0"/><path d="M5.4,1.6 Q9.4,1 9.6,4.6 M9.6,4.6 L8.4,3.4 M9.6,4.6 L10.6,3.2" stroke="#2040c0" stroke-width=".7" fill="none"/><rect x="1" y="5.6" width="10" height="5.4" rx="1" fill="#e8e8e8" stroke="#202020" stroke-width=".7"/><rect x="2.6" y="7.2" width="6.8" height="2.2" fill="#303030"/></svg>
<i style="left:483.1px;top:400px;width:1px;height:7px;background:#f4f4fc;box-shadow:.6px 0 0 #b0b0c6"></i>
<svg class="abs" style="left:490px;top:402.6px" width="11" height="11" viewBox="0 0 12 12"><path d="M1,3 H11 M1,3 L3,1.4 M1,3 L3,4.6 M11,3 L9,1.4 M11,3 L9,4.6" stroke="#2040d0" stroke-width=".9" fill="none"/><rect x=".8" y="6.6" width="10.4" height="4" fill="#e8c8b0" stroke="#2040a0" stroke-width=".6"/><path d="M2.6,8 V10 M4.4,8 V10 M6.2,8 V10 M8,8 V10 M9.8,8 V10" stroke="#c03020" stroke-width=".5"/></svg>
<svg class="abs" style="left:504.6px;top:402.6px" width="11" height="11" viewBox="0 0 12 12"><path d="M2,2.4 L6,.8 L10.4,1.6 V9.6 L6.4,11.2 L2,9.8 Z" fill="#383840" stroke="#101010" stroke-width=".5"/><rect x="3" y="4" width="3" height="3" fill="#30c0c0"/><path d="M6.4,3 V11 " stroke="#707078" stroke-width=".5"/><path d="M.6,5.6 H3" stroke="#2060e0" stroke-width=".8"/></svg>
<svg class="abs" style="left:519px;top:402.6px" width="11" height="11" viewBox="0 0 12 12"><circle cx="6" cy="2.4" r="1.5" fill="none" stroke="#303030" stroke-width=".8"/><path d="M3,4.2 H9 L9.6,11 H2.4 Z" fill="#c8a020" stroke="#403000" stroke-width=".6"/><path d="M4,5 H5.4 V10 H3.6 Z" fill="#f0d860"/></svg>
<i style="left:537.5px;top:400px;width:1px;height:7px;background:#f4f4fc;box-shadow:.6px 0 0 #b0b0c6"></i>
<svg class="abs" style="left:542.6px;top:402.6px" width="11" height="11" viewBox="0 0 12 12"><rect x="1" y="1" width="10" height="10" fill="#d8d8e8" stroke="#b8b8cc" stroke-width=".6"/><path d="M1,3.6 H11 M4.4,1 V11 M7.8,3.6 V11 M1,7 H11" stroke="#b8b8cc" stroke-width=".6"/><rect x="4.4" y="3.6" width="3.4" height="3.4" fill="#c8c8dc"/></svg>
<svg class="abs" style="left:557.6px;top:402.6px" width="11" height="11" viewBox="0 0 12 12"><rect x="1" y="2" width="8.6" height="9" fill="#40c8e8" stroke="#104860" stroke-width=".7"/><rect x="2.2" y="3.2" width="6.2" height="6.6" fill="#80e0f4"/><path d="M1,1 H9.6 M10.8,2 V11" stroke="#d0a020" stroke-width=".9"/></svg>
<i style="left:576.5px;top:400px;width:1px;height:7px;background:#f4f4fc;box-shadow:.6px 0 0 #b0b0c6"></i>
<svg class="abs" style="left:583px;top:402.6px" width="11" height="11" viewBox="0 0 12 12"><path d="M1,9.6 L4,6.6 H11" stroke="#2030a0" stroke-width=".6" fill="none"/><path d="M1,9.6 L2.6,9.4 L1.4,8.2 Z" fill="#2030a0"/></svg>
<span class="t" style="left:586.50px;top:402.08px;font-size:3.6px;line-height:5.04px;color:#2030a0;font-weight:bold;transform:scaleX(0.9103);">ABC</span>
<svg class="abs" style="left:592.6px;top:413.4px" width="3.4" height="2" viewBox="0 0 3.4 2"><path d="M0,0 H3.4 L1.7,2 Z" fill="#101010"/></svg>
<i style="left:601.5px;top:400px;width:1px;height:7px;background:#f4f4fc;box-shadow:.6px 0 0 #b0b0c6"></i>
<svg class="abs" style="left:607px;top:402.6px" width="11" height="11" viewBox="0 0 12 12"><path d="M1.4,3.4 L5.4,1 L10.4,2.4 V8.4 L6,11.2 L1.4,9.4 Z" fill="#3870d8" stroke="#203080" stroke-width=".5"/><path d="M1.4,3.4 L6,5 V11.2 L1.4,9.4 Z" fill="#5898f0"/><path d="M6,5 L10.4,2.4 V8.4 L6,11.2 Z" fill="#c04858"/><path d="M3,2.4 L7.6,3.8 L7.6,9.6" fill="none" stroke="#e8a0a0" stroke-width=".5"/></svg>
<svg class="abs" style="left:617.6px;top:413.4px" width="3.4" height="2" viewBox="0 0 3.4 2"><path d="M0,0 H3.4 L1.7,2 Z" fill="#101010"/></svg>
<i style="left:627.5px;top:400px;width:1px;height:7px;background:#f4f4fc;box-shadow:.6px 0 0 #b0b0c6"></i>
<svg class="abs" style="left:633.6px;top:402.6px" width="11" height="11" viewBox="0 0 12 12"><path d="M1,7 L5,4.4 L11,6 L7,9.4 Z" fill="#20a8c0" stroke="#104050" stroke-width=".5"/><path d="M1,7 V8.6 L7,11 V9.4 Z" fill="#c02040"/><path d="M7,9.4 V11 L11,7.6 V6 Z" fill="#801828"/><path d="M5.6,.6 L6.2,2.4 L8,2.8 L6.2,3.4 L5.6,5 L5,3.4 L3.4,2.8 L5,2.4 Z" fill="#f8e040" stroke="#a08000" stroke-width=".3"/></svg>
<svg class="abs" style="left:644.6px;top:413.4px" width="3.4" height="2" viewBox="0 0 3.4 2"><path d="M0,0 H3.4 L1.7,2 Z" fill="#101010"/></svg>
<i style="left:653.2px;top:400px;width:1px;height:7px;background:#f4f4fc;box-shadow:.6px 0 0 #b0b0c6"></i>
<svg class="abs" style="left:659.6px;top:402.6px" width="11" height="11" viewBox="0 0 12 12"><path d="M1,5 Q1.4,1.6 5.6,1.6 Q7,1.8 7.6,3 L10.8,1 L11.2,2.6 L8.4,5 Q9,9.8 5,10.6 Q1.2,10.2 1,5 Z" fill="#e88a20" stroke="#80400a" stroke-width=".5"/><path d="M2.4,5.4 Q4,3.4 6.4,4.4 M2.6,7.4 Q4.6,5.6 7,6.6 M3.6,9 Q5,7.8 6.8,8.4" stroke="#f8d090" stroke-width=".6" fill="none"/></svg>
<svg class="abs" style="left:0;top:0" width="800" height="450" viewBox="0 0 800 450"><path d="M780.2,398.5 L784.9,399 L781.5,402.9" fill="none" stroke="#e03444" stroke-width="1.1"/><g font-family="Liberation Sans, sans-serif" font-weight="bold" font-style="italic"><text x="775.6" y="409.4" font-size="8.8" fill="#3c2c8c">D</text><text x="781.6" y="408.9" font-size="9.4" fill="#f0a41c">S</text><text x="779" y="413.1" font-size="4.4" fill="#3c2c8c" textLength="16.4" lengthAdjust="spacingAndGlyphs">CATIA</text></g></svg>
<span class="t" style="left:2.00px;top:418.65px;font-size:6.5px;line-height:9.1px;color:#0c0c14;transform:scaleX(0.9592);-webkit-text-stroke:.15px #0c0c14;">Click in Element(s) to extract field (or icon) to select the element to be extracted / Change propagation type / Select support if needed</span>
<i style="left:608.7px;top:418.2px;width:155px;height:9.3px;background:#fff;border:.6px solid #9898b0"></i>
<i style="left:765.5px;top:418.2px;width:14px;height:9.3px;background:#dcdcf0;border:.6px solid;border-color:#fff #606078 #606078 #fff"></i>
<svg class="abs" style="left:768.5px;top:419.4px" width="8" height="7" viewBox="0 0 8 7"><rect x=".5" y=".6" width="4.6" height="3.6" fill="none" stroke="#101010" stroke-width=".7"/><path d="M.5,5.8 H7.4 M6.6,2 V5.8" stroke="#101010" stroke-width=".7"/></svg>
<i style="left:783.7px;top:418.2px;width:15px;height:9.3px;background:#dedeee;border:.6px solid;border-color:#f4f4fc #b0b0c4 #b0b0c4 #f4f4fc"></i>
<svg class="abs" style="left:787px;top:419.6px" width="8" height="6.6" viewBox="0 0 8 6.6"><rect x=".5" y=".5" width="7" height="5.6" fill="none" stroke="#b8b8c8" stroke-width=".7"/><circle cx="4" cy="3.3" r="1.4" fill="none" stroke="#b8b8c8" stroke-width=".6"/></svg>
<i style="left:783px;top:43.9px;width:8px;height:1.2px;background:#f8f8ff;box-shadow:0 .6px 0 #a8a8c0"></i>
<svg class="abs" style="left:784px;top:48px" width="13" height="13" viewBox="0 0 12 12"><path d="M.6,2 L5,4.4 L11,1.2 L11.4,8 L6,11 L1,8 Z" fill="#e88820" stroke="#703808" stroke-width=".5"/><path d="M2.4,2 L6,.8 L10,2.2 L9,7 L5,8.4 L2,6.6 Z" fill="#202020"/><path d="M3.6,2.8 L6,2 L8.4,3 L7.8,5.6 L5.2,6.6 L3.4,5.4 Z" fill="#d8d8d8"/></svg>
<i style="left:783px;top:68.4px;width:8px;height:1.2px;background:#f8f8ff;box-shadow:0 .6px 0 #a8a8c0"></i>
<svg class="abs" style="left:784.6px;top:74px" width="10.6" height="10.6" viewBox="0 0 12 12"><path d="M1.4,3.6 L4.6,1.2 L10.6,2.4 V9 L6.8,11.4 L1.4,9.8 Z" fill="#d4d4e0" stroke="#a8a8b8" stroke-width=".7"/><path d="M1.4,3.6 L6.8,4.8 V11.4 M6.8,4.8 L10.6,2.4" fill="none" stroke="#a8a8b8" stroke-width=".7"/><path d="M2.4,2.6 L5,1.4 L8,2 L6,3.2 Z" fill="#f4f4fa"/><rect x="2.6" y="5.6" width="2.8" height="2.8" fill="#b4b4c6"/><path d="M7.6,5.6 L9.8,4.4 V8.4 L7.6,9.6 Z" fill="#bcbccc"/></svg>
<svg class="abs" style="left:784.6px;top:89.4px" width="10.6" height="10.6" viewBox="0 0 12 12"><path d="M1.4,3.6 L4.6,1.2 L10.6,2.4 V9 L6.8,11.4 L1.4,9.8 Z" fill="#d4d4e0" stroke="#a8a8b8" stroke-width=".7"/><path d="M1.4,3.6 L6.8,4.8 V11.4 M6.8,4.8 L10.6,2.4" fill="none" stroke="#a8a8b8" stroke-width=".7"/><path d="M2.4,2.6 L5,1.4 L8,2 L6,3.2 Z" fill="#f4f4fa"/><rect x="2.6" y="5.6" width="2.8" height="2.8" fill="#b4b4c6"/><path d="M7.6,5.6 L9.8,4.4 V8.4 L7.6,9.6 Z" fill="#bcbccc"/></svg>
<svg class="abs" style="left:784.6px;top:104px" width="10.6" height="10.6" viewBox="0 0 12 12"><path d="M1.4,3.6 L4.6,1.2 L10.6,2.4 V9 L6.8,11.4 L1.4,9.8 Z" fill="#d4d4e0" stroke="#a8a8b8" stroke-width=".7"/><path d="M1.4,3.6 L6.8,4.8 V11.4 M6.8,4.8 L10.6,2.4" fill="none" stroke="#a8a8b8" stroke-width=".7"/><path d="M2.4,2.6 L5,1.4 L8,2 L6,3.2 Z" fill="#f4f4fa"/><rect x="2.6" y="5.6" width="2.8" height="2.8" fill="#b4b4c6"/><path d="M7.6,5.6 L9.8,4.4 V8.4 L7.6,9.6 Z" fill="#bcbccc"/></svg>
<svg class="abs" style="left:784.6px;top:118.6px" width="10.6" height="10.6" viewBox="0 0 12 12"><path d="M1.4,3.6 L4.6,1.2 L10.6,2.4 V9 L6.8,11.4 L1.4,9.8 Z" fill="#d4d4e0" stroke="#a8a8b8" stroke-width=".7"/><path d="M1.4,3.6 L6.8,4.8 V11.4 M6.8,4.8 L10.6,2.4" fill="none" stroke="#a8a8b8" stroke-width=".7"/><path d="M2.4,2.6 L5,1.4 L8,2 L6,3.2 Z" fill="#f4f4fa"/><rect x="2.6" y="5.6" width="2.8" height="2.8" fill="#b4b4c6"/><path d="M7.6,5.6 L9.8,4.4 V8.4 L7.6,9.6 Z" fill="#bcbccc"/></svg>
<i style="left:783px;top:134.4px;width:8px;height:1.2px;background:#f8f8ff;box-shadow:0 .6px 0 #a8a8c0"></i>
<svg class="abs" style="left:786px;top:141.4px" width="10" height="11" viewBox="0 0 12 12"><path d="M1.6,.8 L1.6,9.6 L4,7.6 L5.8,11.2 L7.4,10.4 L5.6,7 L8.8,6.8 Z" fill="#f0e040" stroke="#202020" stroke-width=".6"/></svg>
<svg class="abs" style="left:796px;top:152.6px" width="3.4" height="2" viewBox="0 0 3.4 2"><path d="M0,0 H3.4 L1.7,2 Z" fill="#101010"/></svg>
<svg class="abs" style="left:785px;top:158px" width="10.6" height="10.6" viewBox="0 0 12 12"><path d="M1,1.4 L10,10 M10,1.6 L2,10.4" stroke="#202020" stroke-width=".8"/><circle cx="5.6" cy="5.8" r="1.8" fill="#101010"/><path d="M6,6 L9.4,9.6 L7,10.4 Z" fill="#40b060"/><path d="M6.6,3.4 L9,2 L9.4,4.4 Z" fill="#e8d040"/></svg>
<svg class="abs" style="left:796px;top:168.6px" width="3.4" height="2" viewBox="0 0 3.4 2"><path d="M0,0 H3.4 L1.7,2 Z" fill="#101010"/></svg>
<i style="left:783px;top:175.0px;width:8px;height:1.2px;background:#f8f8ff;box-shadow:0 .6px 0 #a8a8c0"></i>
<svg class="abs" style="left:784.4px;top:182px" width="11.4" height="11.4" viewBox="0 0 12 12"><rect x=".8" y="2.6" width="8.6" height="8.4" fill="#f0f0f4" stroke="#303030" stroke-width=".7"/><path d="M2,9.6 V6 H4 V9.6 M4.8,9.6 L7,5 L8.6,9.6" fill="none" stroke="#404040" stroke-width=".6"/><path d="M6,6.4 L10.6,.8 L11.4,1.6 L7.2,7.2 Z" fill="#d0c040" stroke="#403800" stroke-width=".4"/></svg>
<svg class="abs" style="left:796px;top:193.4px" width="3.4" height="2" viewBox="0 0 3.4 2"><path d="M0,0 H3.4 L1.7,2 Z" fill="#101010"/></svg>
<i style="left:783px;top:199.8px;width:8px;height:1.2px;background:#f8f8ff;box-shadow:0 .6px 0 #a8a8c0"></i>
<i style="left:789.7px;top:210.8px;width:2px;height:2px;border-radius:50%;background:#1030c0"></i>
<svg class="abs" style="left:796px;top:217.4px" width="3.4" height="2" viewBox="0 0 3.4 2"><path d="M0,0 H3.4 L1.7,2 Z" fill="#101010"/></svg>
<svg class="abs" style="left:785px;top:221px" width="12" height="12" viewBox="0 0 12 12"><path d="M1.2,10.7 L10.5,1.3" stroke="#2038a8" stroke-width="1"/></svg>
<svg class="abs" style="left:796px;top:233.4px" width="3.4" height="2" viewBox="0 0 3.4 2"><path d="M0,0 H3.4 L1.7,2 Z" fill="#101010"/></svg>
<svg class="abs" style="left:784.6px;top:239px" width="11.4" height="11.4" viewBox="0 0 12 12"><path d="M.8,8.6 L4.6,3.6 H11.4 L7.6,8.6 Z" fill="#f0e878" stroke="#404020" stroke-width=".6"/></svg>
<svg class="abs" style="left:796px;top:249px" width="3.4" height="2" viewBox="0 0 3.4 2"><path d="M0,0 H3.4 L1.7,2 Z" fill="#101010"/></svg>
<i style="left:781px;top:252.20000000000002px;width:19px;height:1.2px;background:#f8f8ff;box-shadow:0 .6px 0 #a8a8c0"></i>
<svg class="abs" style="left:785px;top:257px" width="11" height="11" viewBox="0 0 12 12"><path d="M1,9 Q1.4,4.6 6,4.6 Q10.6,4.6 11,9 L8.8,10.6 Q8.6,7.4 6,7.4 Q3.4,7.4 3,10.6 Z" fill="#28b8c0" stroke="#0a4858" stroke-width=".5"/><path d="M3,8.6 Q6,6 9,8.6" stroke="#f0e050" stroke-width="1" fill="none"/><path d="M3,3.6 Q5,.6 7,2 Q8.6,3 10,.8" stroke="#30a0a0" stroke-width=".7" fill="none"/></svg>
<svg class="abs" style="left:796px;top:268.6px" width="3.4" height="2" viewBox="0 0 3.4 2"><path d="M0,0 H3.4 L1.7,2 Z" fill="#101010"/></svg>
<svg class="abs" style="left:785px;top:272.4px" width="11" height="11" viewBox="0 0 12 12"><path d="M1,5 L4,1 L9,1.6 L11.2,5 L9.6,10 L5,8.4 L2.6,10.6 L3.6,6.6 Z" fill="#2868d8" stroke="#0a2060" stroke-width=".5"/><path d="M4,4 Q7,2.6 9.6,5.4 L8.4,8.2 Q6.4,6 4,6.6 Z" fill="#30c0c0"/><path d="M4.6,5.2 Q7,4.4 8.8,6.6" stroke="#f0e050" stroke-width=".8" fill="none"/></svg>
<svg class="abs" style="left:785px;top:286.6px" width="11" height="11" viewBox="0 0 12 12"><path d="M1,7.4 L6.6,1.4 Q10.6,1.6 11.2,5.2 L5.6,11 Q5,7.6 1,7.4 Z" fill="#2888e0" stroke="#0a2870" stroke-width=".5"/><path d="M3.4,6.6 L8,2 M5,8 L9.8,3.2" stroke="#60d8e0" stroke-width=".9"/><path d="M1,7.4 Q5,7.6 5.6,11" stroke="#f0e050" stroke-width=".8" fill="none"/></svg>
<svg class="abs" style="left:796px;top:299px" width="3.4" height="2" viewBox="0 0 3.4 2"><path d="M0,0 H3.4 L1.7,2 Z" fill="#101010"/></svg>
<i style="left:781px;top:302.2px;width:19px;height:1.2px;background:#f8f8ff;box-shadow:0 .6px 0 #a8a8c0"></i>
<svg class="abs" style="left:785px;top:306.6px" width="11.4" height="11.4" viewBox="0 0 11.4 11.4"><circle cx="5.7" cy="5.7" r="4.7" fill="none" stroke="#2868c8" stroke-width=".9"/></svg>
<svg class="abs" style="left:796px;top:318.6px" width="3.4" height="2" viewBox="0 0 3.4 2"><path d="M0,0 H3.4 L1.7,2 Z" fill="#101010"/></svg>
<svg class="abs" style="left:785px;top:322px" width="11" height="11" viewBox="0 0 12 12"><path d="M2.4,2.6 Q6,-.4 8.4,2 Q10.4,4.6 6.4,6 Q2.4,7.4 4,9.6 Q5.4,11.4 8,10.4" fill="none" stroke="#1838c0" stroke-width="1.1"/></svg>
<svg class="abs" style="left:796px;top:334px" width="3.4" height="2" viewBox="0 0 3.4 2"><path d="M0,0 H3.4 L1.7,2 Z" fill="#101010"/></svg>
<i style="left:783px;top:340.4px;width:8px;height:1.2px;background:#f8f8ff;box-shadow:0 .6px 0 #a8a8c0"></i>
<svg class="abs" style="left:784.6px;top:346.6px" width="11.6" height="11.6" viewBox="0 0 12 12"><path d="M1,3 Q4,1 7,2.4 L11,6 L9.6,9.6 L5,10.6 L1.4,8 Z" fill="#b89070" stroke="#503018" stroke-width=".5"/><path d="M5,3.6 L10.6,6.4 L9.4,8.6 L4,6.4 Z" fill="#181818"/><path d="M2,4 L4,8.6 M3,3.2 L5.6,9.4" stroke="#f0e0c0" stroke-width=".5"/><circle cx="9.4" cy="3" r="1" fill="#e02020"/><circle cx="2.6" cy="9.6" r=".8" fill="#e02020"/></svg>
<i style="left:783px;top:363.79999999999995px;width:8px;height:1.2px;background:#f8f8ff;box-shadow:0 .6px 0 #a8a8c0"></i>
<svg class="abs" style="left:784.6px;top:370.4px" width="11.6" height="11.6" viewBox="0 0 12 12"><path d="M.8,9.6 Q1,5 6,4.6 Q11,5 11.2,9.6 Q6,11.4 .8,9.6 Z" fill="#28a8c0" stroke="#0a4050" stroke-width=".6"/><path d="M4.4,9 L6,6 L7.6,9 Z" fill="#f0e040"/><path d="M6,4.6 V2.4" stroke="#202020" stroke-width=".7"/><circle cx="6" cy="1.6" r="1" fill="#101010"/></svg>
<span class="t" style="left:793.00px;top:387.10px;font-size:5px;line-height:7.0px;color:#c4c4d4;transform:scaleX(1.2228);">»</span>
</div>
<div id="taskc" class="abs" style="left:0;top:0">
<i style="left:0;top:429px;width:800px;height:21px;background:#111116"></i>
<i style="left:25px;top:429px;width:179px;height:21px;background:#f3f3f3"></i>
<svg class="abs" style="left:8px;top:435px" width="9.4" height="9.4" viewBox="0 0 9.4 9.4"><path d="M0,1.3 L3.9,.75 V4.4 H0 Z M4.5,.65 L9.4,0 V4.4 H4.5 Z M0,5 H3.9 V8.65 L0,8.1 Z M4.5,5 H9.4 V9.4 L4.5,8.75 Z" fill="#fff"/></svg>
<svg class="abs" style="left:30px;top:434px" width="11" height="11" viewBox="0 0 11 11"><circle cx="6.8" cy="4.2" r="2.7" fill="none" stroke="#333" stroke-width=".9"/><path d="M4.8,6.2 L1.2,9.8" stroke="#333" stroke-width="1"/></svg>
<span class="t" style="left:46.00px;top:434.30px;font-size:8px;line-height:11.2px;color:#303030;transform:scaleX(0.9618);-webkit-text-stroke:.15px #303030;">Type here to search</span>
<svg class="abs" style="left:211px;top:434px" width="11" height="11" viewBox="0 0 11 11"><circle cx="5.5" cy="5.5" r="3.6" fill="none" stroke="#fff" stroke-width="1"/></svg>
<svg class="abs" style="left:236px;top:435px" width="11" height="9" viewBox="0 0 11 9"><path d="M1,.8 V8.2 M1,.8 H2 M1,8.2 H2 M7.6,.8 V8.2 M7.6,.8 H6.6 M7.6,8.2 H6.6" stroke="#fff" stroke-width=".8" fill="none"/><rect x="2.6" y="2" width="3.6" height="5" fill="none" stroke="#fff" stroke-width=".8"/><rect x="9.2" y="2.6" width=".9" height="1.2" fill="#fff"/><rect x="9.2" y="5.2" width=".9" height="1.2" fill="#fff"/></svg>
<svg class="abs" style="left:261.5px;top:432.3px" width="14" height="14" viewBox="0 0 14 14"><defs><linearGradient id="eg" x1="0" y1="0" x2="1" y2="1"><stop offset="0" stop-color="#35c1f1"/><stop offset=".5" stop-color="#1b9de2"/><stop offset="1" stop-color="#0c59a4"/></linearGradient></defs><circle cx="7" cy="7" r="6.5" fill="url(#eg)"/><path d="M1,8 Q1.5,2 7,1 Q12.5,1.5 13,6.5 Q13,9.5 10,9.5 Q8,9.5 8.3,8 Q8.8,6.5 7,5.5 Q4,5 3.3,8 Q3,11 6,13 Q2,12.5 1,8 Z" fill="#5fe27a" opacity=".75"/><path d="M4.2,8 Q4.5,5.6 7,5.8 Q8.6,6.4 8.2,8 Q8.2,9.6 10.2,9.6 Q11.6,9.5 12.4,8.6 Q11,12.4 7.6,12.2 Q4.4,11.6 4.2,8 Z" fill="#0c4a94"/></svg>
<svg class="abs" style="left:288px;top:433.5px" width="14" height="12" viewBox="0 0 14 12"><rect x="3" y=".6" width="9.6" height="6.8" fill="#2aa3ee" stroke="#8fd4ff" stroke-width=".5"/><path d="M.6,9 L5.5,7.6 L10,8.4 L5.2,10.6 Z" fill="#e8e8e8"/><path d="M1.6,9 L5.4,8 L8.6,8.5 L5,9.9 Z" fill="#9aa0a8"/><rect x="6.8" y="7.4" width="2.4" height="1" fill="#c8c8c8"/></svg>
<svg class="abs" style="left:313.5px;top:433.5px" width="13" height="11.5" viewBox="0 0 13 11.5"><path d="M.6,1.4 H5 L6,2.6 H12.4 V10.6 H.6 Z" fill="#f6c445"/><rect x=".6" y="3.6" width="11.8" height="7" fill="#fbd968"/><rect x="3" y="6.6" width="7" height="4" fill="#3a8de0"/><rect x="4.6" y="8.4" width="3.8" height="2.2" fill="#fbd968"/></svg>
<svg class="abs" style="left:339.5px;top:433.8px" width="13.4" height="11.4" viewBox="0 0 13.4 11.4"><path d="M.4,4.2 L6.7,.4 L13,4.2 V10.8 H.4 Z" fill="#1a8fe6"/><path d="M.4,4.4 L6.7,8.2 L13,4.4 V3.8 L6.7,.4 L.4,3.8 Z" fill="#0b6cc4"/><path d="M1.6,4.6 L6.7,7.6 L11.8,4.6 V3.2 H1.6 Z" fill="#e8f4ff"/><path d="M.4,10.8 L6.7,6.4 L13,10.8 Z" fill="#39a6f2"/></svg>
<svg class="abs" style="left:366px;top:433.4px" width="12" height="12" viewBox="0 0 12 12"><circle cx="6" cy="6" r="5.8" fill="#e33b2e"/><path d="M6,6 L.98,3.1 A5.8,5.8 0 0 0 5.2,11.74 Z" fill="#2da94f"/><path d="M6,6 L5.2,11.74 A5.8,5.8 0 0 0 11.2,3.4 Z" fill="#fcc934"/><path d="M6,6 L11.2,3.4 L6,3.4 Z" fill="#e33b2e"/><circle cx="6" cy="6" r="2.7" fill="#fff"/><circle cx="6" cy="6" r="2.1" fill="#4285f4"/></svg>
<svg class="abs" style="left:391.4px;top:433.4px" width="12" height="12" viewBox="0 0 12 12"><path d="M11.17,5.43 L11.17,6.57 L9.75,7.09 L9.42,7.88 L10.06,9.25 L9.25,10.06 L7.88,9.42 L7.09,9.75 L6.57,11.17 L5.43,11.17 L4.91,9.75 L4.12,9.42 L2.75,10.06 L1.94,9.25 L2.58,7.88 L2.25,7.09 L0.83,6.57 L0.83,5.43 L2.25,4.91 L2.58,4.12 L1.94,2.75 L2.75,1.94 L4.12,2.58 L4.91,2.25 L5.43,0.83 L6.57,0.83 L7.09,2.25 L7.88,2.58 L9.25,1.94 L10.06,2.75 L9.42,4.12 L9.75,4.91 Z" fill="#fff"/><circle cx="6" cy="6" r="2.3" fill="#111116"/><circle cx="6" cy="6" r="2.3" fill="none" stroke="#fff" stroke-width=".5"/><circle cx="6" cy="6" r="1.4" fill="#111116"/></svg>
<svg class="abs" style="left:416.5px;top:433.6px" width="13" height="12" viewBox="0 0 13 12"><rect x="4" y=".6" width="8.6" height="10.8" rx=".6" fill="#2b7cd3"/><rect x="4" y="3.4" width="8.6" height="2.7" fill="#41a5ee"/><rect x="4" y="8.6" width="8.6" height="2.8" fill="#103f91"/><rect x="4" y="6" width="8.6" height="2.7" fill="#185abd"/><rect x=".4" y="2.8" width="7" height="6.6" rx=".5" fill="#185abd"/><path d="M1.8,4.4 L2.7,7.8 L3.9,4.8 L5.1,7.8 L6,4.4" fill="none" stroke="#fff" stroke-width=".8"/></svg>
<i style="left:437px;top:429px;width:25px;height:21px;background:#37373c"></i>
<svg class="abs" style="left:443px;top:434px" width="13.4" height="11.4" viewBox="0 0 13.4 11.4"><rect x="0" y="0" width="13.4" height="11.4" fill="#e8e8e8"/><rect x=".8" y=".8" width="11.8" height="9.8" fill="#101018"/><path d="M1.4,1 Q5,3 8.6,10.4 L6.4,10.4 Q4.4,5 1.4,3 Z" fill="#2a8cf0"/><path d="M3,1 Q7,3.4 10.4,10.4 L8.6,10.4 Q5.6,3.4 3,1 Z" fill="#7fd0ff"/><circle cx="9.6" cy="4.8" r="2.6" fill="#f08020"/><circle cx="10" cy="4.4" r="1.3" fill="#ffe060"/></svg>
<i style="left:260px;top:448.6px;width:19px;height:1.4px;background:#8aa0c0"></i>
<i style="left:310px;top:448.6px;width:21px;height:1.4px;background:#8aa0c0"></i>
<i style="left:361px;top:448.6px;width:22px;height:1.4px;background:#8aa0c0"></i>
<i style="left:387px;top:448.6px;width:21px;height:1.4px;background:#8aa0c0"></i>
<i style="left:413px;top:448.6px;width:21px;height:1.4px;background:#8aa0c0"></i>
<i style="left:437px;top:448.6px;width:25px;height:1.4px;background:#a8c4ea"></i>
<svg class="abs" style="left:642px;top:435px" width="9" height="8" viewBox="0 0 9 8"><path d="M1,5.6 L4.5,2.2 L8,5.6" fill="none" stroke="#fff" stroke-width=".9"/></svg>
<svg class="abs" style="left:655px;top:433.5px" width="9" height="11" viewBox="0 0 9 11"><rect x="1.6" y="1" width="4.6" height="9" rx="1.4" fill="none" stroke="#e8e8e8" stroke-width=".8"/><rect x="2.6" y="3.4" width="2.6" height="3.6" fill="none" stroke="#e8e8e8" stroke-width=".6"/><path d="M6.4,4 H7.6 V7 H6.4" fill="none" stroke="#e8e8e8" stroke-width=".6"/></svg>
<svg class="abs" style="left:666px;top:434px" width="11" height="10" viewBox="0 0 11 10"><path d="M2.4,7 Q.6,7 .8,5.2 Q1,3.8 2.6,3.8 Q3.2,1.6 5.4,2 Q7,2.2 7.4,3.8 Q9.4,3.8 9.2,5.6 Q9,7 7.6,7 Z" fill="#d8d8d8"/><circle cx="7.8" cy="7" r="2.3" fill="#e81224"/><path d="M6.8,6 L8.8,8 M8.8,6 L6.8,8" stroke="#fff" stroke-width=".6"/></svg>
<svg class="abs" style="left:679.5px;top:435.6px" width="11" height="7" viewBox="0 0 11 7"><rect x=".6" y=".8" width="8.4" height="5.2" fill="none" stroke="#fff" stroke-width=".8"/><rect x="1.6" y="1.8" width="4.6" height="3.2" fill="#fff"/><rect x="9.2" y="2.4" width="1" height="2" fill="#fff"/></svg>
<svg class="abs" style="left:692.5px;top:434.6px" width="9" height="9" viewBox="0 0 9 9"><path d="M1,8 L8,8 L8,1 Z" fill="none"/><path d="M1.2,8 A7,7 0 0 1 8,1.2" fill="none" stroke="#bbb" stroke-width=".7"/><path d="M3.4,8 A4.8,4.8 0 0 1 8,3.4" fill="none" stroke="#bbb" stroke-width=".7"/><path d="M5.6,8 A2.6,2.6 0 0 1 8,5.6" fill="none" stroke="#eee" stroke-width=".8"/><circle cx="7.6" cy="7.8" r=".8" fill="#fff"/></svg>
<svg class="abs" style="left:703.5px;top:434.6px" width="10" height="9" viewBox="0 0 10 9"><path d="M.8,3.2 H2.4 L4.4,1.2 V7.8 L2.4,5.8 H.8 Z" fill="none" stroke="#fff" stroke-width=".7"/><path d="M5.6,3 Q6.6,4.5 5.6,6" fill="none" stroke="#fff" stroke-width=".6"/><path d="M6.8,2 Q8.4,4.5 6.8,7" fill="none" stroke="#ddd" stroke-width=".6"/><path d="M8,1.2 Q10,4.5 8,7.8" fill="none" stroke="#bbb" stroke-width=".6"/></svg>
<span class="t" style="left:719.00px;top:434.88px;font-size:6.6px;line-height:9.24px;color:#fff;transform:scaleX(0.8390);">ENG</span>
<span class="t" style="left:740.00px;top:430.08px;font-size:6.6px;line-height:9.24px;color:#fff;transform:scaleX(0.9324);">02:58 AM</span>
<span class="t" style="left:737.60px;top:440.08px;font-size:6.6px;line-height:9.24px;color:#fff;transform:scaleX(0.9204);">07/04/2021</span>
<svg class="abs" style="left:777.5px;top:434.4px" width="11" height="10.4" viewBox="0 0 11 10.4"><path d="M.8,.8 H10.2 V7.8 H5 L3,9.8 V7.8 H.8 Z" fill="none" stroke="#fff" stroke-width=".8"/><circle cx="8.6" cy="7.6" r="1.3" fill="#111116" stroke="#fff" stroke-width=".5"/></svg>
</div>
<div id="top" class="abs" style="left:0;top:0">
<span class="t" style="left:11.00px;top:1.58px;font-size:6.6px;line-height:9.24px;color:#1a1a1a;transform:scaleX(0.8680);">CATIA V5 - [CENTER CONSOLE COIN HOLDER FINAL.CATPart]</span>
<span class="t" style="left:14.60px;top:12.58px;font-size:6.6px;line-height:9.24px;color:#15152a;transform:scaleX(0.8825);">Start</span>
<span class="t" style="left:39.75px;top:12.58px;font-size:6.6px;line-height:9.24px;color:#15152a;transform:scaleX(0.8742);">ENOVIA V5 VPM</span>
<span class="t" style="left:91.75px;top:12.58px;font-size:6.6px;line-height:9.24px;color:#15152a;transform:scaleX(0.8463);">File</span>
<span class="t" style="left:113.75px;top:12.58px;font-size:6.6px;line-height:9.24px;color:#15152a;transform:scaleX(0.8793);">Edit</span>
<span class="t" style="left:136.00px;top:12.58px;font-size:6.6px;line-height:9.24px;color:#15152a;transform:scaleX(0.9517);">View</span>
<span class="t" style="left:162.00px;top:12.58px;font-size:6.6px;line-height:9.24px;color:#15152a;transform:scaleX(0.9088);">Insert</span>
<span class="t" style="left:189.50px;top:12.58px;font-size:6.6px;line-height:9.24px;color:#15152a;transform:scaleX(0.8762);">Tools</span>
<span class="t" style="left:216.75px;top:12.58px;font-size:6.6px;line-height:9.24px;color:#15152a;transform:scaleX(0.9692);">Window</span>
<span class="t" style="left:252.00px;top:12.58px;font-size:6.6px;line-height:9.24px;color:#15152a;transform:scaleX(0.9578);">Help</span>
<i style="left:14.6px;top:20.5px;width:3.0px;height:.5px;background:#15152a;opacity:.6"></i>
<i style="left:91.75px;top:20.5px;width:2.7px;height:.5px;background:#15152a;opacity:.6"></i>
<i style="left:113.75px;top:20.5px;width:3.0px;height:.5px;background:#15152a;opacity:.6"></i>
<i style="left:136px;top:20.5px;width:4.0px;height:.5px;background:#15152a;opacity:.6"></i>
<i style="left:162px;top:20.5px;width:1.4px;height:.5px;background:#15152a;opacity:.6"></i>
<i style="left:189.5px;top:20.5px;width:3.2px;height:.5px;background:#15152a;opacity:.6"></i>
<i style="left:216.75px;top:20.5px;width:5.8px;height:.5px;background:#15152a;opacity:.6"></i>
<i style="left:252px;top:20.5px;width:4.0px;height:.5px;background:#15152a;opacity:.6"></i>
</div>
<div id="tree" class="abs" style="left:0;top:0">
<i style="left:0;top:42px;width:1.1px;height:354.5px;background:#9a9aa0"></i>
<i style="left:1.1px;top:42px;width:9.1px;height:354.5px;background:#5555ad"></i>
<i style="left:10.2px;top:42px;width:4.6px;height:354.5px;background:#302e5a"></i>
<i style="left:1.1px;top:115px;width:9.1px;height:121px;background:#7878f8;border-top:1px solid #9c9cff"></i>
<i style="left:1.1px;top:42px;width:9.1px;height:8.8px;background:#8a8af8"></i>
<i style="left:1.1px;top:387.4px;width:9.1px;height:9.1px;background:#8a8af8"></i>
<svg class="abs" style="left:2.8px;top:44.6px" width="6.4" height="5" viewBox="0 0 6.4 5"><path d="M3.2,.2 L6.2,4.8 H.2 Z" fill="#08080c"/></svg>
<svg class="abs" style="left:2.8px;top:390px" width="6.4" height="5" viewBox="0 0 6.4 5"><path d="M3.2,4.8 L6.2,.2 H.2 Z" fill="#08080c"/></svg>
<i style="left:14.8px;top:42px;width:1.5px;height:354.5px;background:#ececf6"></i>
<i style="left:41.6px;top:54.5px;width:1.4px;height:342px;background:#f4f4ff"></i>
<svg class="abs" style="left:0;top:0" width="0" height="0"><defs><radialGradient id="gPlus" cx=".4" cy=".3" r=".8"><stop offset="0" stop-color="#ffffff"/><stop offset=".5" stop-color="#c8c8c8"/><stop offset="1" stop-color="#686868"/></radialGradient></defs></svg>
<i class="hl" style="top:67.50px"></i>
<svg class="abs" style="left:51.6px;top:60.60px" width="14" height="15" viewBox="0 0 14 15"><path d="M7.1,0 L13,3.6 L13.4,11.2 L5.8,14.6 L.8,10.8 L.4,4.1 Z" fill="#0c1420"/><path d="M7.1,1.2 L11.4,3.9 L5.9,6.2 L2,4.5 Z" fill="#2c3a6c" stroke="#38d8e8" stroke-width=".9"/><path d="M1.5,5.2 L5.2,7.4 L5.2,12.8 L1.9,10.2 Z" fill="#283464" stroke="#38d8e8" stroke-width=".9"/><path d="M6.4,7.3 L12.2,4.6 L12.6,10.8 L6.4,13.6 Z" fill="#34dcea"/><rect x="7.5" y="7.9" width="2.4" height="2.7" fill="#e02818"/><path d="M9.3,10.1 L13,13.3" stroke="#f09020" stroke-width="1.5"/></svg>
<span class="t" style="left:68.60px;top:63.30px;font-size:9px;line-height:12.6px;color:#e6e6f4;transform:scaleX(0.9231);-webkit-text-stroke:.2px #e6e6f4;">Extract.32</span>
<i class="hl" style="top:86.25px"></i>
<svg class="abs" style="left:51.6px;top:79.35px" width="14" height="15" viewBox="0 0 14 15"><path d="M7.1,0 L13,3.6 L13.4,11.2 L5.8,14.6 L.8,10.8 L.4,4.1 Z" fill="#0c1420"/><path d="M7.1,1.2 L11.4,3.9 L5.9,6.2 L2,4.5 Z" fill="#2c3a6c" stroke="#38d8e8" stroke-width=".9"/><path d="M1.5,5.2 L5.2,7.4 L5.2,12.8 L1.9,10.2 Z" fill="#283464" stroke="#38d8e8" stroke-width=".9"/><path d="M6.4,7.3 L12.2,4.6 L12.6,10.8 L6.4,13.6 Z" fill="#34dcea"/><rect x="7.5" y="7.9" width="2.4" height="2.7" fill="#e02818"/><path d="M9.3,10.1 L13,13.3" stroke="#f09020" stroke-width="1.5"/></svg>
<span class="t" style="left:68.60px;top:82.05px;font-size:9px;line-height:12.6px;color:#e6e6f4;transform:scaleX(0.9231);-webkit-text-stroke:.2px #e6e6f4;">Extract.33</span>
<i class="hl" style="top:105.00px"></i>
<svg class="abs" style="left:51.6px;top:98.10px" width="14" height="15" viewBox="0 0 14 15"><path d="M7.1,0 L13,3.6 L13.4,11.2 L5.8,14.6 L.8,10.8 L.4,4.1 Z" fill="#0c1420"/><path d="M7.1,1.2 L11.4,3.9 L5.9,6.2 L2,4.5 Z" fill="#2c3a6c" stroke="#38d8e8" stroke-width=".9"/><path d="M1.5,5.2 L5.2,7.4 L5.2,12.8 L1.9,10.2 Z" fill="#283464" stroke="#38d8e8" stroke-width=".9"/><path d="M6.4,7.3 L12.2,4.6 L12.6,10.8 L6.4,13.6 Z" fill="#34dcea"/><rect x="7.5" y="7.9" width="2.4" height="2.7" fill="#e02818"/><path d="M9.3,10.1 L13,13.3" stroke="#f09020" stroke-width="1.5"/></svg>
<span class="t" style="left:68.60px;top:100.80px;font-size:9px;line-height:12.6px;color:#e6e6f4;transform:scaleX(0.9231);-webkit-text-stroke:.2px #e6e6f4;">Extract.34</span>
<i class="hl" style="top:123.75px"></i>
<svg class="abs" style="left:51.6px;top:116.85px" width="14" height="15" viewBox="0 0 14 15"><path d="M7.1,0 L13,3.6 L13.4,11.2 L5.8,14.6 L.8,10.8 L.4,4.1 Z" fill="#0c1420"/><path d="M7.1,1.2 L11.4,3.9 L5.9,6.2 L2,4.5 Z" fill="#2c3a6c" stroke="#38d8e8" stroke-width=".9"/><path d="M1.5,5.2 L5.2,7.4 L5.2,12.8 L1.9,10.2 Z" fill="#283464" stroke="#38d8e8" stroke-width=".9"/><path d="M6.4,7.3 L12.2,4.6 L12.6,10.8 L6.4,13.6 Z" fill="#34dcea"/><rect x="7.5" y="7.9" width="2.4" height="2.7" fill="#e02818"/><path d="M9.3,10.1 L13,13.3" stroke="#f09020" stroke-width="1.5"/></svg>
<span class="t" style="left:68.60px;top:119.55px;font-size:9px;line-height:12.6px;color:#e6e6f4;transform:scaleX(0.9231);-webkit-text-stroke:.2px #e6e6f4;">Extract.35</span>
<i class="hl" style="top:142.50px"></i>
<svg class="abs" style="left:51.6px;top:135.60px" width="14" height="15" viewBox="0 0 14 15"><path d="M7.1,0 L13,3.6 L13.4,11.2 L5.8,14.6 L.8,10.8 L.4,4.1 Z" fill="#0c1420"/><path d="M7.1,1.2 L11.4,3.9 L5.9,6.2 L2,4.5 Z" fill="#2c3a6c" stroke="#38d8e8" stroke-width=".9"/><path d="M1.5,5.2 L5.2,7.4 L5.2,12.8 L1.9,10.2 Z" fill="#283464" stroke="#38d8e8" stroke-width=".9"/><path d="M6.4,7.3 L12.2,4.6 L12.6,10.8 L6.4,13.6 Z" fill="#34dcea"/><rect x="7.5" y="7.9" width="2.4" height="2.7" fill="#e02818"/><path d="M9.3,10.1 L13,13.3" stroke="#f09020" stroke-width="1.5"/></svg>
<span class="t" style="left:68.60px;top:138.30px;font-size:9px;line-height:12.6px;color:#e6e6f4;transform:scaleX(0.9231);-webkit-text-stroke:.2px #e6e6f4;">Extract.36</span>
<i class="hl" style="top:161.25px"></i>
<svg class="abs" style="left:51.6px;top:154.35px" width="14" height="15" viewBox="0 0 14 15"><path d="M7.1,0 L13,3.6 L13.4,11.2 L5.8,14.6 L.8,10.8 L.4,4.1 Z" fill="#0c1420"/><path d="M7.1,1.2 L11.4,3.9 L5.9,6.2 L2,4.5 Z" fill="#2c3a6c" stroke="#38d8e8" stroke-width=".9"/><path d="M1.5,5.2 L5.2,7.4 L5.2,12.8 L1.9,10.2 Z" fill="#283464" stroke="#38d8e8" stroke-width=".9"/><path d="M6.4,7.3 L12.2,4.6 L12.6,10.8 L6.4,13.6 Z" fill="#34dcea"/><rect x="7.5" y="7.9" width="2.4" height="2.7" fill="#e02818"/><path d="M9.3,10.1 L13,13.3" stroke="#f09020" stroke-width="1.5"/></svg>
<span class="t" style="left:68.60px;top:157.05px;font-size:9px;line-height:12.6px;color:#e6e6f4;transform:scaleX(0.9231);-webkit-text-stroke:.2px #e6e6f4;">Extract.37</span>
<i class="hl" style="top:180.00px"></i>
<svg class="abs" style="left:51.6px;top:173.10px" width="14" height="15" viewBox="0 0 14 15"><path d="M7.1,0 L13,3.6 L13.4,11.2 L5.8,14.6 L.8,10.8 L.4,4.1 Z" fill="#0c1420"/><path d="M7.1,1.2 L11.4,3.9 L5.9,6.2 L2,4.5 Z" fill="#2c3a6c" stroke="#38d8e8" stroke-width=".9"/><path d="M1.5,5.2 L5.2,7.4 L5.2,12.8 L1.9,10.2 Z" fill="#283464" stroke="#38d8e8" stroke-width=".9"/><path d="M6.4,7.3 L12.2,4.6 L12.6,10.8 L6.4,13.6 Z" fill="#34dcea"/><rect x="7.5" y="7.9" width="2.4" height="2.7" fill="#e02818"/><path d="M9.3,10.1 L13,13.3" stroke="#f09020" stroke-width="1.5"/></svg>
<span class="t" style="left:68.60px;top:175.80px;font-size:9px;line-height:12.6px;color:#e6e6f4;transform:scaleX(0.9231);-webkit-text-stroke:.2px #e6e6f4;">Extract.38</span>
<i class="hl" style="top:198.75px"></i>
<svg class="abs" style="left:51.6px;top:191.85px" width="14" height="15" viewBox="0 0 14 15"><path d="M7.1,0 L13,3.6 L13.4,11.2 L5.8,14.6 L.8,10.8 L.4,4.1 Z" fill="#0c1420"/><path d="M7.1,1.2 L11.4,3.9 L5.9,6.2 L2,4.5 Z" fill="#2c3a6c" stroke="#38d8e8" stroke-width=".9"/><path d="M1.5,5.2 L5.2,7.4 L5.2,12.8 L1.9,10.2 Z" fill="#283464" stroke="#38d8e8" stroke-width=".9"/><path d="M6.4,7.3 L12.2,4.6 L12.6,10.8 L6.4,13.6 Z" fill="#34dcea"/><rect x="7.5" y="7.9" width="2.4" height="2.7" fill="#e02818"/><path d="M9.3,10.1 L13,13.3" stroke="#f09020" stroke-width="1.5"/></svg>
<span class="t" style="left:68.60px;top:194.55px;font-size:9px;line-height:12.6px;color:#e6e6f4;transform:scaleX(0.9231);-webkit-text-stroke:.2px #e6e6f4;">Extract.39</span>
<i class="hl" style="top:217.50px"></i>
<svg class="abs" style="left:51.6px;top:210.60px" width="14" height="15" viewBox="0 0 14 15"><path d="M7.1,0 L13,3.6 L13.4,11.2 L5.8,14.6 L.8,10.8 L.4,4.1 Z" fill="#0c1420"/><path d="M7.1,1.2 L11.4,3.9 L5.9,6.2 L2,4.5 Z" fill="#2c3a6c" stroke="#38d8e8" stroke-width=".9"/><path d="M1.5,5.2 L5.2,7.4 L5.2,12.8 L1.9,10.2 Z" fill="#283464" stroke="#38d8e8" stroke-width=".9"/><path d="M6.4,7.3 L12.2,4.6 L12.6,10.8 L6.4,13.6 Z" fill="#34dcea"/><rect x="7.5" y="7.9" width="2.4" height="2.7" fill="#e02818"/><path d="M9.3,10.1 L13,13.3" stroke="#f09020" stroke-width="1.5"/></svg>
<span class="t" style="left:68.60px;top:213.30px;font-size:9px;line-height:12.6px;color:#e6e6f4;transform:scaleX(0.9231);-webkit-text-stroke:.2px #e6e6f4;">Extract.40</span>
<i class="hl" style="top:236.25px"></i>
<svg class="abs" style="left:51.6px;top:229.35px" width="14" height="15" viewBox="0 0 14 15"><path d="M7.1,0 L13,3.6 L13.4,11.2 L5.8,14.6 L.8,10.8 L.4,4.1 Z" fill="#0c1420"/><path d="M7.1,1.2 L11.4,3.9 L5.9,6.2 L2,4.5 Z" fill="#2c3a6c" stroke="#38d8e8" stroke-width=".9"/><path d="M1.5,5.2 L5.2,7.4 L5.2,12.8 L1.9,10.2 Z" fill="#283464" stroke="#38d8e8" stroke-width=".9"/><path d="M6.4,7.3 L12.2,4.6 L12.6,10.8 L6.4,13.6 Z" fill="#34dcea"/><rect x="7.5" y="7.9" width="2.4" height="2.7" fill="#e02818"/><path d="M9.3,10.1 L13,13.3" stroke="#f09020" stroke-width="1.5"/></svg>
<span class="t" style="left:68.60px;top:232.05px;font-size:9px;line-height:12.6px;color:#e6e6f4;transform:scaleX(0.9231);-webkit-text-stroke:.2px #e6e6f4;">Extract.41</span>
<i class="hl" style="top:254.40px"></i>
<svg class="abs" style="left:50.7px;top:247.30px" width="15.4" height="15.4" viewBox="0 0 15.4 15.4"><rect x="0" y="0" width="15.4" height="15.4" fill="#747496"/><rect x=".4" y=".4" width="14.6" height="14.6" fill="none" stroke="#55557a" stroke-width=".8"/><rect x="1.4" y="1.4" width="5.6" height="5.2" rx="1" fill="#1828c8"/><rect x="1.8" y="7.6" width="5" height="6" fill="#30a8d8" stroke="#103060" stroke-width=".4"/><path d="M8.6,1.4 H13.8 V6.4 Q10.4,5.6 8.6,1.4 Z" fill="#1838d0"/><path d="M9,1.6 Q10.6,5 13.6,5.8" stroke="#40c0f0" stroke-width="1" fill="none"/><path d="M8.6,13.8 V8 H13.8 Q13,12 8.6,13.8 Z" fill="#1838d0"/><path d="M9,12.8 Q12.4,11.6 13.4,8.4" stroke="#40c0f0" stroke-width="1" fill="none"/></svg>
<svg class="abs" style="left:38.2px;top:251.00px" width="8" height="8" viewBox="0 0 8 8"><circle cx="4" cy="4" r="3.9" fill="url(#gPlus)"/><path d="M1.2,4 H6.8 M4,1.2 V6.8" stroke="#080808" stroke-width="1.5"/></svg>
<span class="t" style="left:68.00px;top:250.80px;font-size:9px;line-height:12.6px;color:#e6e6f4;transform:scaleX(0.9578);-webkit-text-stroke:.2px #e6e6f4;">Join.4</span>
<i class="hl" style="top:273.15px"></i>
<svg class="abs" style="left:50.7px;top:266.05px" width="15.4" height="15.4" viewBox="0 0 15.4 15.4"><rect x="0" y="0" width="15.4" height="15.4" fill="#747496"/><rect x=".4" y=".4" width="14.6" height="14.6" fill="none" stroke="#55557a" stroke-width=".8"/><path d="M1.6,7.4 Q2.2,1.8 7.8,1.6 Q13.2,1.8 13.8,7.4 L11.4,8 Q11,4.2 7.8,4 Q4.6,4.2 4,8 Z" fill="#38b8e0" stroke="#1050a0" stroke-width=".4"/><path d="M2.6,12.8 Q3.4,9.6 7.8,9.4 Q12.2,9.6 13,12.8 Q7.8,14.4 2.6,12.8 Z" fill="#2858d0"/><path d="M7.7,11.6 V6.2" stroke="#e02818" stroke-width="1.4"/><path d="M7.7,4.2 L5.8,7 H9.6 Z" fill="#f0d020"/></svg>
<svg class="abs" style="left:38.2px;top:269.75px" width="8" height="8" viewBox="0 0 8 8"><circle cx="4" cy="4" r="3.9" fill="url(#gPlus)"/><path d="M1.2,4 H6.8 M4,1.2 V6.8" stroke="#080808" stroke-width="1.5"/></svg>
<span class="t" style="left:68.00px;top:269.55px;font-size:9px;line-height:12.6px;color:#e6e6f4;transform:scaleX(0.9808);-webkit-text-stroke:.2px #e6e6f4;">Offset.11</span>
<i class="hl" style="top:291.90px"></i>
<svg class="abs" style="left:50.7px;top:284.80px" width="15.4" height="15.4" viewBox="0 0 15.4 15.4"><rect x="0" y="0" width="15.4" height="15.4" fill="#747496"/><rect x=".4" y=".4" width="14.6" height="14.6" fill="none" stroke="#55557a" stroke-width=".8"/><path d="M1.6,8.4 L6.6,3.4 L12,5.6 L7.4,11 Z" fill="#f0e040" stroke="#605000" stroke-width=".4"/><path d="M3.4,10.4 L7.4,11 L12,5.6 L13.4,8.6 L8.6,13.8 L4.4,12.8 Z" fill="#38c0e8" stroke="#104880" stroke-width=".4"/><path d="M11,1.4 L13.8,2.8 L12,5.6 L9.8,4.6 Z" fill="#101010"/></svg>
<svg class="abs" style="left:38.2px;top:288.50px" width="8" height="8" viewBox="0 0 8 8"><circle cx="4" cy="4" r="3.9" fill="url(#gPlus)"/><path d="M1.2,4 H6.8 M4,1.2 V6.8" stroke="#080808" stroke-width="1.5"/></svg>
<span class="t" style="left:68.00px;top:288.30px;font-size:9px;line-height:12.6px;color:#e6e6f4;transform:scaleX(0.9665);-webkit-text-stroke:.2px #e6e6f4;">Extrapol.21</span>
<i class="hl" style="top:310.65px"></i>
<svg class="abs" style="left:50.7px;top:303.55px" width="15.4" height="15.4" viewBox="0 0 15.4 15.4"><rect x="0" y="0" width="15.4" height="15.4" fill="#747496"/><rect x=".4" y=".4" width="14.6" height="14.6" fill="none" stroke="#55557a" stroke-width=".8"/><circle cx="7.8" cy="9" r="5" fill="#2898b8"/><path d="M3.6,8 Q5,4.6 7.8,4.4 Q10.6,4.6 12,8" stroke="#50d0e0" stroke-width="1.2" fill="none"/><path d="M7.8,3 V10.6 M7.8,10.6 L4.8,12.6 M7.8,10.6 L10.8,12.6" stroke="#f4f4f4" stroke-width="1" fill="none"/><path d="M1.4,2 L3.4,3.6" stroke="#f0e040" stroke-width="1.2"/><path d="M12,2.8 L14,3.8" stroke="#2040e0" stroke-width="1.2"/><path d="M5.4,1.4 L6.6,3.4" stroke="#2040e0" stroke-width="1"/></svg>
<span class="t" style="left:68.00px;top:307.05px;font-size:9px;line-height:12.6px;color:#e6e6f4;transform:scaleX(0.9652);-webkit-text-stroke:.2px #e6e6f4;">Surface Untrim.14</span>
<i class="hl" style="top:329.40px"></i>
<svg class="abs" style="left:50.7px;top:322.30px" width="15.4" height="15.4" viewBox="0 0 15.4 15.4"><rect x="0" y="0" width="15.4" height="15.4" fill="#747496"/><rect x=".4" y=".4" width="14.6" height="14.6" fill="none" stroke="#55557a" stroke-width=".8"/><circle cx="7.8" cy="9" r="5" fill="#2898b8"/><path d="M3.6,8 Q5,4.6 7.8,4.4 Q10.6,4.6 12,8" stroke="#50d0e0" stroke-width="1.2" fill="none"/><path d="M7.8,3 V10.6 M7.8,10.6 L4.8,12.6 M7.8,10.6 L10.8,12.6" stroke="#f4f4f4" stroke-width="1" fill="none"/><path d="M1.4,2 L3.4,3.6" stroke="#f0e040" stroke-width="1.2"/><path d="M12,2.8 L14,3.8" stroke="#2040e0" stroke-width="1.2"/><path d="M5.4,1.4 L6.6,3.4" stroke="#2040e0" stroke-width="1"/></svg>
<span class="t" style="left:68.00px;top:325.80px;font-size:9px;line-height:12.6px;color:#e6e6f4;transform:scaleX(0.9652);-webkit-text-stroke:.2px #e6e6f4;">Surface Untrim.15</span>
<i class="hl" style="top:348.15px"></i>
<svg class="abs" style="left:50.7px;top:341.05px" width="15.4" height="15.4" viewBox="0 0 15.4 15.4"><rect x="0" y="0" width="15.4" height="15.4" fill="#747496"/><rect x=".4" y=".4" width="14.6" height="14.6" fill="none" stroke="#55557a" stroke-width=".8"/><rect x="1.4" y="1.4" width="5.6" height="5.2" rx="1" fill="#1828c8"/><rect x="1.8" y="7.6" width="5" height="6" fill="#30a8d8" stroke="#103060" stroke-width=".4"/><path d="M8.6,1.4 H13.8 V6.4 Q10.4,5.6 8.6,1.4 Z" fill="#1838d0"/><path d="M9,1.6 Q10.6,5 13.6,5.8" stroke="#40c0f0" stroke-width="1" fill="none"/><path d="M8.6,13.8 V8 H13.8 Q13,12 8.6,13.8 Z" fill="#1838d0"/><path d="M9,12.8 Q12.4,11.6 13.4,8.4" stroke="#40c0f0" stroke-width="1" fill="none"/></svg>
<svg class="abs" style="left:38.2px;top:344.75px" width="8" height="8" viewBox="0 0 8 8"><circle cx="4" cy="4" r="3.9" fill="url(#gPlus)"/><path d="M1.2,4 H6.8 M4,1.2 V6.8" stroke="#080808" stroke-width="1.5"/></svg>
<span class="t" style="left:68.00px;top:344.55px;font-size:9px;line-height:12.6px;color:#e6e6f4;transform:scaleX(0.9578);-webkit-text-stroke:.2px #e6e6f4;">Join.5</span>
<i class="hl" style="top:366.90px"></i>
<svg class="abs" style="left:50.7px;top:359.80px" width="15.4" height="15.4" viewBox="0 0 15.4 15.4"><rect x="0" y="0" width="15.4" height="15.4" fill="#747496"/><rect x=".4" y=".4" width="14.6" height="14.6" fill="none" stroke="#55557a" stroke-width=".8"/><path d="M1.6,8.4 L6.6,3.4 L12,5.6 L7.4,11 Z" fill="#f0e040" stroke="#605000" stroke-width=".4"/><path d="M3.4,10.4 L7.4,11 L12,5.6 L13.4,8.6 L8.6,13.8 L4.4,12.8 Z" fill="#38c0e8" stroke="#104880" stroke-width=".4"/><path d="M11,1.4 L13.8,2.8 L12,5.6 L9.8,4.6 Z" fill="#101010"/></svg>
<svg class="abs" style="left:38.2px;top:363.50px" width="8" height="8" viewBox="0 0 8 8"><circle cx="4" cy="4" r="3.9" fill="url(#gPlus)"/><path d="M1.2,4 H6.8 M4,1.2 V6.8" stroke="#080808" stroke-width="1.5"/></svg>
<span class="t" style="left:68.00px;top:363.30px;font-size:9px;line-height:12.6px;color:#e6e6f4;transform:scaleX(0.9665);-webkit-text-stroke:.2px #e6e6f4;">Extrapol.22</span>
<i class="hl" style="top:385.65px"></i>
<svg class="abs" style="left:50.7px;top:378.55px" width="15.4" height="15.4" viewBox="0 0 15.4 15.4"><rect x="0" y="0" width="15.4" height="15.4" fill="#747496"/><rect x=".4" y=".4" width="14.6" height="14.6" fill="none" stroke="#55557a" stroke-width=".8"/><path d="M1.6,7.4 Q2.2,1.8 7.8,1.6 Q13.2,1.8 13.8,7.4 L11.4,8 Q11,4.2 7.8,4 Q4.6,4.2 4,8 Z" fill="#38b8e0" stroke="#1050a0" stroke-width=".4"/><path d="M2.6,12.8 Q3.4,9.6 7.8,9.4 Q12.2,9.6 13,12.8 Q7.8,14.4 2.6,12.8 Z" fill="#2858d0"/><path d="M7.7,11.6 V6.2" stroke="#e02818" stroke-width="1.4"/><path d="M7.7,4.2 L5.8,7 H9.6 Z" fill="#f0d020"/></svg>
<svg class="abs" style="left:38.2px;top:382.25px" width="8" height="8" viewBox="0 0 8 8"><circle cx="4" cy="4" r="3.9" fill="url(#gPlus)"/><path d="M1.2,4 H6.8 M4,1.2 V6.8" stroke="#080808" stroke-width="1.5"/></svg>
<span class="t" style="left:68.00px;top:382.05px;font-size:9px;line-height:12.6px;color:#e6e6f4;transform:scaleX(0.9628);-webkit-text-stroke:.2px #e6e6f4;">Offset.12</span>
<i style="left:28.6px;top:42px;width:1.2px;height:4px;background:#f4f4ff"></i>
<i style="left:33px;top:49.2px;width:6px;height:1.2px;background:#f4f4ff"></i>
<svg class="abs" style="left:24.8px;top:45px" width="9" height="9" viewBox="0 0 8 8"><circle cx="4" cy="4" r="3.8" fill="url(#gPlus)"/><path d="M1.2,4 H6.8" stroke="#101010" stroke-width="1.4"/></svg>
<svg class="abs" style="left:38px;top:42px" width="15" height="14" viewBox="38 42 15 14"><path d="M39.4,45.4 Q39.8,43.2 43,43.1 L47.4,43.3 Q49.1,43.8 49.1,46 L49,49.4 L50.8,51 L50.6,53.6 Q46.6,55 43.5,54.4 L43.3,52 L39.6,50.6 Z" fill="#fbe98a"/><path d="M41.2,45 Q42.4,43.8 44,45 Q45.2,46.4 46.6,45 Q47.6,44.2 47,46.6 M41.6,47 Q43.4,46 44.6,47.6 Q45.8,48.4 46.8,47.4" stroke="#e8782c" stroke-width=".9" fill="none"/><path d="M39.3,50.2 Q43,48.8 46,50 Q48,50.8 49.6,50.4 L49.4,51.8 Q46,52.4 43.6,51.4 Q41,50.8 39.6,52 Z" fill="#10187c"/><path d="M39.6,51.6 Q42,50.4 44.4,51.6 M50.8,43.4 Q52.8,45 51.4,47.2 Q50.6,48.2 50,48.6 M50.4,52 Q51.8,52.6 52.4,51.4 M49.8,54 Q51.4,54.4 52,53.4" stroke="#2cb0e0" stroke-width=".9" fill="none"/></svg>
<span class="t" style="left:55.60px;top:44.20px;font-size:9px;line-height:12.6px;color:#e6e6f4;transform:scaleX(0.8442);-webkit-text-stroke:.2px #e6e6f4;">FLANGE</span>
</div>
</body></html>
